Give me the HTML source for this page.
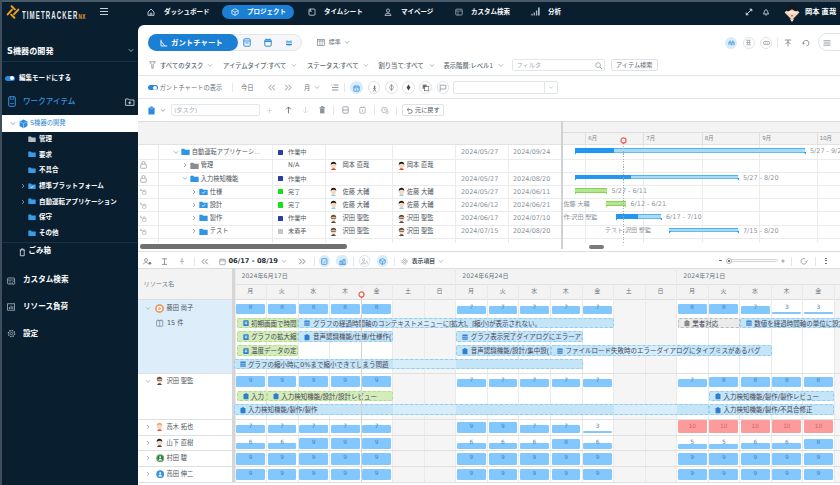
<!DOCTYPE html>
<html lang="ja"><head><meta charset="utf-8"><title>TimeTracker NX</title>
<style>
html,body{margin:0;padding:0;}
body{width:840px;height:485px;overflow:hidden;background:#091f30;font-family:"Liberation Sans","Noto Sans CJK JP",sans-serif;}
#root{position:relative;width:840px;height:485px;overflow:hidden;background:#091f30;}
#root div,#root svg{position:absolute;box-sizing:border-box;}
#root svg{overflow:visible;}
.t{white-space:nowrap;overflow:visible;}
.tb{white-space:nowrap;overflow:hidden;font-size:6.5px;color:#445;border-radius:1.5px;}
.tb span.l{position:absolute;left:0;top:0;}
.n{font-family:"DejaVu Sans","Liberation Sans",sans-serif;font-size:1.03em;}
</style></head><body><div id="root">

<div style="left:0px;top:0px;width:840px;height:2px;background:#4b5a68;"></div>
<div style="left:0px;top:0px;width:2px;height:485px;background:#3f4e5c;"></div>
<svg style="left:6px;top:4px;" width="15" height="16" viewBox="0 0 15 16"><g stroke="#f0a020" stroke-width="2" stroke-linecap="round" fill="none"><path d="M5.6 2.2 L8.8 5.4"/><path d="M12.3 5.6 L8.2 10.2"/><path d="M5.8 5.8 L1.7 10.4"/><path d="M5.2 10.6 L8.4 13.8"/></g></svg>
<div class="t" style="left:21.5px;top:8.7px;height:12px;line-height:12px;font-size:10.5px;font-weight:700;color:#e8edf2;letter-spacing:1.9px;transform:scaleX(.58);transform-origin:0 50%;">TIMETRACKER<span style="color:#f0a020;font-size:8px;letter-spacing:.8px;">NX</span></div>
<div style="left:100.3px;top:8.2px;width:7.8px;height:1px;background:#c6ced6;"></div>
<div style="left:100.3px;top:10.95px;width:7.8px;height:1px;background:#c6ced6;"></div>
<div style="left:100.3px;top:13.7px;width:7.8px;height:1px;background:#c6ced6;"></div>
<svg style="left:147px;top:8px;" width="8" height="8" viewBox="0 0 8 8"><path d="M1 4 L4 1 L7 4 V7.3 H1 Z" fill="none" stroke="#e6ebf0" stroke-width=".8"/><path d="M3.2 7.3 V5.2 H4.8 V7.3" fill="none" stroke="#e6ebf0" stroke-width=".7"/></svg>
<div class="t" style="left:164px;top:5.8px;height:12px;line-height:12px;font-size:6.5px;color:#fff;font-weight:700;">ダッシュボード</div>
<div style="left:221.7px;top:5.2px;width:72px;height:13.4px;background:#1b7fd4;border-radius:7px;"></div>
<svg style="left:231px;top:8px;" width="8" height="8" viewBox="0 0 8 8"><path d="M4 .8 L7.2 2.5 V5.7 L4 7.4 L.8 5.7 V2.5 Z M.8 2.5 L4 4.2 L7.2 2.5 M4 4.2 V7.4" fill="none" stroke="#fff" stroke-width=".7"/></svg>
<div class="t" style="left:247px;top:5.8px;height:12px;line-height:12px;font-size:6.5px;color:#fff;font-weight:700;">プロジェクト</div>
<svg style="left:308px;top:8px;" width="8" height="8" viewBox="0 0 8 8"><rect x="1" y="1" width="6" height="6.2" rx=".8" fill="none" stroke="#d5dbe2" stroke-width=".8"/><path d="M2.5 1 V3 M1 3.2 H4" stroke="#d5dbe2" stroke-width=".7"/></svg>
<div class="t" style="left:324px;top:5.8px;height:12px;line-height:12px;font-size:6.5px;color:#fff;font-weight:700;">タイムシート</div>
<svg style="left:383.5px;top:8px;" width="8" height="8" viewBox="0 0 8 8"><circle cx="4" cy="2.6" r="1.6" fill="none" stroke="#d5dbe2" stroke-width=".8"/><path d="M1 7.4 C1 4.6 7 4.6 7 7.4 Z" fill="none" stroke="#d5dbe2" stroke-width=".8"/></svg>
<div class="t" style="left:401px;top:5.8px;height:12px;line-height:12px;font-size:6.5px;color:#fff;font-weight:700;">マイページ</div>
<svg style="left:455px;top:8px;" width="8" height="8" viewBox="0 0 8 8"><rect x=".8" y="1.2" width="6.4" height="5.8" rx=".6" fill="none" stroke="#aab4be" stroke-width=".8"/><path d="M.8 3 H7.2 M3 3 V7" stroke="#aab4be" stroke-width=".6"/></svg>
<div class="t" style="left:471px;top:5.8px;height:12px;line-height:12px;font-size:6.5px;color:#fff;font-weight:700;">カスタム検索</div>
<svg style="left:531px;top:7px;" width="9" height="9" viewBox="0 0 9 9"><path d="M1 8.6 V6.8 M3.3 8.6 V5.4 M5.6 8.6 V3.4" stroke="#aeb8c2" stroke-width="1.3"/><path d="M7.9 8.6 V.4" stroke="#e6ebf0" stroke-width="1.3"/></svg>
<div class="t" style="left:548px;top:5.8px;height:12px;line-height:12px;font-size:6.5px;color:#fff;font-weight:700;">分析</div>
<svg style="left:745px;top:8px;" width="8" height="8" viewBox="0 0 8 8"><path d="M1.2 6.8 L6.8 1.2 M4.6 1.2 H6.8 V3.4 M1.2 4.6 V6.8 H3.4" fill="none" stroke="#e6ebf0" stroke-width=".9"/></svg>
<svg style="left:761.5px;top:8px;" width="8" height="8" viewBox="0 0 8 8"><path d="M1.5 6 C2.4 5 2 2 4 1.6 C6 2 5.6 5 6.5 6 Z M3.3 7 H4.7" fill="none" stroke="#e6ebf0" stroke-width=".8"/></svg>
<svg style="left:783px;top:3px;" width="18" height="19" viewBox="0 0 18 19"><path d="M9 1.6 L16.4 9.4 L9 17 L1.6 9.4 Z" fill="#f8d2b4"/><path d="M9 .2 L15.2 7.6 L12.6 8.4 L9 6.2 L5.4 8.4 L2.8 7.6 Z" fill="#15181c"/><path d="M4.6 8.6 H13.4 V10.4 H4.6 Z" fill="#f4f4f4"/><path d="M7.8 12.2 H10.2 L9 14 Z" fill="#e03a2a"/><path d="M6.8 15.6 L9 19 L11.2 15.6 L9 16.6 Z" fill="#fff"/></svg>
<div class="t" style="left:805px;top:5.8px;height:12px;line-height:12px;font-size:7.3px;color:#fff;font-weight:700;">岡本 直哉</div>
<div class="t" style="left:7px;top:44.6px;height:12px;line-height:12px;font-size:8.1px;color:#fff;font-weight:700;"><span class="n">S</span>機器の開発</div>
<svg style="left:128px;top:48px;" width="6" height="5" viewBox="0 0 6 5"><path d="M.8 1.2 L3 3.6 L5.2 1.2" fill="none" stroke="#aab6c2" stroke-width=".9"/></svg>
<div style="left:2px;top:61px;width:135px;height:0.8px;background:#1d3346;"></div>
<div style="left:5px;top:75.6px;width:9.5px;height:5px;background:#2b87dd;border-radius:2.5px;"></div>
<div style="left:10.3px;top:76.4px;width:3.4px;height:3.4px;background:#fff;border-radius:2px;"></div>
<div class="t" style="left:19px;top:72.2px;height:12px;line-height:12px;font-size:6.5px;color:#fff;font-weight:700;">編集モードにする</div>
<svg style="left:7.5px;top:95.5px;" width="8" height="11" viewBox="0 0 8 11"><rect x=".7" y=".7" width="6.6" height="9.6" rx="1" fill="none" stroke="#3a8fdc" stroke-width="1"/><path d="M2.3 .7 V3.2 H5.7 V.7 M2 7.6 H6" stroke="#3a8fdc" stroke-width=".8" fill="none"/></svg>
<div class="t" style="left:23px;top:95.5px;height:12px;line-height:12px;font-size:7.6px;color:#3a8fdc;font-weight:500;">ワークアイテム</div>
<svg style="left:124.5px;top:98px;" width="10" height="8" viewBox="0 0 10 8"><path d="M.6 1 H3.6 L4.4 2 H9 V7.4 H.6 Z" fill="none" stroke="#dfe5ea" stroke-width=".8"/><path d="M4.8 3.4 V6.2 M3.4 4.8 H6.2" stroke="#dfe5ea" stroke-width=".9"/></svg>
<div style="left:2px;top:115px;width:135.5px;height:16.5px;background:#fff;"></div>
<svg style="left:10px;top:121px;" width="6" height="5" viewBox="0 0 6 5"><path d="M.8 1.2 L3 3.6 L5.2 1.2" fill="none" stroke="#8a949e" stroke-width=".8"/></svg>
<svg style="left:18.5px;top:118.5px;" width="9" height="10" viewBox="0 0 9 10"><path d="M4.5 .6 L8.4 2.6 V7 L4.5 9.2 L.6 7 V2.6 Z" fill="#2b8be0"/><path d="M.6 2.6 L4.5 4.7 L8.4 2.6 M4.5 4.7 V9.2" stroke="#bfe0fb" stroke-width=".6" fill="none"/></svg>
<div class="t" style="left:30px;top:117.2px;height:12px;line-height:12px;font-size:6.3px;color:#2f86d6;"><span class="n">S</span>機器の開発</div>
<svg style="left:28px;top:135.8px;" width="8" height="6.4" viewBox="0 0 8 6.4"><path d="M.3 .6 H3 L3.7 1.5 H7.7 V6.1 H.3 Z" fill="#b9c0c6"/></svg>
<div class="t" style="left:39px;top:133.2px;height:12px;line-height:12px;font-size:6.5px;color:#fff;font-weight:700;">管理</div>
<svg style="left:28px;top:151.3px;" width="8" height="6.4" viewBox="0 0 8 6.4"><path d="M.3 .6 H3 L3.7 1.5 H7.7 V6.1 H.3 Z" fill="#3a9be8"/></svg>
<div class="t" style="left:39px;top:148.7px;height:12px;line-height:12px;font-size:6.5px;color:#fff;font-weight:700;">要求</div>
<svg style="left:28px;top:166.8px;" width="8" height="6.4" viewBox="0 0 8 6.4"><path d="M.3 .6 H3 L3.7 1.5 H7.7 V6.1 H.3 Z" fill="#3a9be8"/></svg>
<div class="t" style="left:39px;top:164.2px;height:12px;line-height:12px;font-size:6.5px;color:#fff;font-weight:700;">不具合</div>
<svg style="left:20.5px;top:183px;" width="4" height="6" viewBox="0 0 4 6"><path d="M1 1 L3 3 L1 5" fill="none" stroke="#9aa6b2" stroke-width=".8"/></svg>
<svg style="left:28px;top:182.8px;" width="8" height="6.4" viewBox="0 0 8 6.4"><path d="M.3 .6 H3 L3.7 1.5 H7.7 V6.1 H.3 Z" fill="#3a9be8"/><path d="M2.6 3.8 L3.6 4.8 L5.6 2.8" stroke="#fff" stroke-width=".8" fill="none"/></svg>
<div class="t" style="left:39px;top:180.2px;height:12px;line-height:12px;font-size:6.5px;color:#fff;font-weight:700;">標準プラットフォーム</div>
<svg style="left:20.5px;top:198.5px;" width="4" height="6" viewBox="0 0 4 6"><path d="M1 1 L3 3 L1 5" fill="none" stroke="#9aa6b2" stroke-width=".8"/></svg>
<svg style="left:28px;top:198.3px;" width="8" height="6.4" viewBox="0 0 8 6.4"><path d="M.3 .6 H3 L3.7 1.5 H7.7 V6.1 H.3 Z" fill="#3a9be8"/></svg>
<div class="t" style="left:39px;top:195.7px;height:12px;line-height:12px;font-size:6.5px;color:#fff;font-weight:700;">自動運転アプリケーション</div>
<svg style="left:28px;top:213.8px;" width="8" height="6.4" viewBox="0 0 8 6.4"><path d="M.3 .6 H3 L3.7 1.5 H7.7 V6.1 H.3 Z" fill="#3a9be8"/></svg>
<div class="t" style="left:39px;top:211.2px;height:12px;line-height:12px;font-size:6.5px;color:#fff;font-weight:700;">保守</div>
<svg style="left:28px;top:229.5px;" width="8" height="6.4" viewBox="0 0 8 6.4"><path d="M.3 .6 H3 L3.7 1.5 H7.7 V6.1 H.3 Z" fill="#3a9be8"/></svg>
<div class="t" style="left:39px;top:226.9px;height:12px;line-height:12px;font-size:6.5px;color:#fff;font-weight:700;">その他</div>
<svg style="left:19px;top:248px;" width="6.6" height="8.6" viewBox="0 0 6 8"><path d="M.6 1.8 H5.4 M2.2 1.8 V.8 H3.8 V1.8 M1.2 1.8 V7.2 H4.8 V1.8" fill="none" stroke="#d5dbe2" stroke-width=".8"/></svg>
<div class="t" style="left:28.5px;top:245.2px;height:12px;line-height:12px;font-size:7.5px;color:#fff;font-weight:700;">ごみ箱</div>
<div style="left:2px;top:242px;width:135px;height:0.7px;background:#1a3043;"></div>
<svg style="left:7px;top:276.5px;" width="9" height="8" viewBox="0 0 9 8"><rect x=".6" y="1" width="7" height="6" rx=".6" fill="none" stroke="#aab4be" stroke-width=".8"/><path d="M.6 3 H7.6 M3 3 V7" stroke="#aab4be" stroke-width=".6"/><circle cx="6.6" cy="5.8" r="1.3" fill="#091f30" stroke="#aab4be" stroke-width=".6"/></svg>
<div class="t" style="left:23px;top:274.3px;height:12px;line-height:12px;font-size:7.6px;color:#fff;font-weight:700;">カスタム検索</div>
<svg style="left:7px;top:303px;" width="9" height="8" viewBox="0 0 9 8"><rect x=".6" y=".8" width="7" height="6.4" fill="none" stroke="#aab4be" stroke-width=".8"/><path d="M2.4 6 V4 M4.1 6 V2.6 M5.8 6 V3.4" stroke="#aab4be" stroke-width=".9"/></svg>
<div class="t" style="left:23px;top:301px;height:12px;line-height:12px;font-size:7.6px;color:#fff;font-weight:700;">リソース負荷</div>
<svg style="left:7px;top:329px;" width="9" height="9" viewBox="0 0 9 9"><circle cx="4.5" cy="4.5" r="3.1" fill="none" stroke="#aab4be" stroke-width="1.3" stroke-dasharray="1.4 1"/><circle cx="4.5" cy="4.5" r="1.2" fill="none" stroke="#aab4be" stroke-width=".7"/></svg>
<div class="t" style="left:23px;top:327.6px;height:12px;line-height:12px;font-size:7.6px;color:#fff;font-weight:700;">設定</div>
<div style="left:137.5px;top:24.5px;width:703px;height:461px;background:#fff;border-top-left-radius:6px;"></div>
<div style="left:147.5px;top:33.5px;width:154.5px;height:17.8px;background:#f4f6f8;border:.6px solid #e3e6ea;border-radius:9px;"></div>
<div style="left:148px;top:33.5px;width:89.5px;height:17.8px;background:#1b7fd4;border-radius:9px;"></div>
<svg style="left:159.5px;top:38.5px;" width="8" height="8" viewBox="0 0 8 8"><path d="M1 .8 V7 H7.2 M1 2.4 L5 7" fill="none" stroke="#fff" stroke-width=".9"/></svg>
<div class="t" style="left:171px;top:36.5px;height:12px;line-height:12px;font-size:7.4px;color:#fff;font-weight:700;">ガントチャート</div>
<svg style="left:243px;top:38px;" width="8" height="9" viewBox="0 0 8 9"><rect x=".8" y=".8" width="6.4" height="7.4" rx="1" fill="none" stroke="#2b8be0" stroke-width="1"/><path d="M.8 3 H7.2 M2.4 5 H5.6" stroke="#2b8be0" stroke-width=".9"/></svg>
<svg style="left:264px;top:38px;" width="8" height="9" viewBox="0 0 8 9"><rect x=".8" y="1.6" width="6.4" height="6.6" rx="1" fill="none" stroke="#2b8be0" stroke-width="1"/><path d="M.8 3.2 H7.2" stroke="#2b8be0" stroke-width="1.6"/><path d="M2.4 .6 V2 M5.6 .6 V2" stroke="#2b8be0" stroke-width=".9"/></svg>
<svg style="left:285px;top:38.5px;" width="8" height="8" viewBox="0 0 8 8"><path d="M1 3 H7 M1 5.4 H7" stroke="#2b8be0" stroke-width="1.1"/><path d="M2 1.4 L3.4 3 M6 1.4 L4.6 3 M2.6 7 L4 5.4 L5.4 7" stroke="#2b8be0" stroke-width=".8" fill="none"/></svg>
<svg style="left:317px;top:38.5px;" width="8" height="7" viewBox="0 0 8 7"><rect x=".5" y=".6" width="7" height="5.8" fill="none" stroke="#7b848c" stroke-width=".7"/><path d="M.5 2 H7.5 M2.9 .6 V6.4 M5.2 .6 V6.4" stroke="#7b848c" stroke-width=".6"/></svg>
<div class="t" style="left:328.5px;top:36.3px;height:12px;line-height:12px;font-size:6.2px;color:#6b747c;">標準</div>
<svg style="left:344px;top:40px;" width="6" height="5" viewBox="0 0 6 5"><path d="M1 1.2 L3 3.4 L5 1.2" fill="none" stroke="#9aa2aa" stroke-width="0.8"/></svg>
<div style="left:725px;top:36.5px;width:12px;height:12px;background:#d9ecfb;border:.6px solid #d9ecfb;border-radius:50%;"></div>
<svg style="left:727.5px;top:39px;" width="7" height="7" viewBox="0 0 7 7"><path d="M1 6.2 V3 H3 V6.2 M4 6.2 V3 H6 V6.2 M1.6 2 H2.6 M4.4 2 H5.4" fill="none" stroke="#2b8be0" stroke-width=".8"/></svg>
<div style="left:742.5px;top:36.5px;width:12px;height:12px;background:#fff;border:.6px solid #dfe3e7;border-radius:50%;"></div>
<svg style="left:745px;top:39px;" width="7" height="7" viewBox="0 0 7 7"><path d="M1 1.2 H6 M1 3.5 H6 M1 5.8 H6 M2.6 1.2 V5.8 M4.4 1.2 V5.8" stroke="#8a939b" stroke-width=".6"/></svg>
<div style="left:760px;top:36.5px;width:12px;height:12px;background:#fff;border:.6px solid #dfe3e7;border-radius:50%;"></div>
<svg style="left:762.5px;top:40.5px;" width="7" height="4" viewBox="0 0 7 4"><rect x=".4" y=".4" width="6.2" height="3.2" rx="1.6" fill="none" stroke="#8a939b" stroke-width=".7"/><circle cx="2.4" cy="2" r=".5" fill="#8a939b"/><circle cx="4.6" cy="2" r=".5" fill="#8a939b"/></svg>
<div style="left:777.3px;top:38px;width:0.6px;height:9px;background:#e4e7ea;"></div>
<svg style="left:784px;top:38.5px;" width="8" height="8" viewBox="0 0 8 8"><path d="M.8 1 H7.2 M4 1.2 V7.4 M4 2.6 L1.6 5 M4 2.6 L6.4 5" fill="none" stroke="#737c84" stroke-width=".8"/></svg>
<svg style="left:802px;top:38.5px;" width="8" height="8" viewBox="0 0 8 8"><path d="M1.4 5 A2.8 2.8 0 1 1 4.6 6.9" fill="none" stroke="#737c84" stroke-width=".8"/><path d="M.6 3.6 L1.4 5.2 L2.8 4.2" fill="none" stroke="#737c84" stroke-width=".7"/></svg>
<div style="left:817.5px;top:33.2px;width:40px;height:18.2px;background:#fff;border:.6px solid #dfe3e7;border-radius:9px;"></div>
<svg style="left:823px;top:39.5px;" width="8" height="6" viewBox="0 0 8 6"><path d="M.5 .8 H7.5 M.5 3 H7.5 M.5 5.2 H7.5" stroke="#8a939b" stroke-width=".9"/></svg>
<svg style="left:148.5px;top:61px;" width="7" height="8" viewBox="0 0 7 8"><path d="M.6 .8 H6.4 L4.2 3.6 V7.2 H2.8 V3.6 Z" fill="none" stroke="#737c84" stroke-width=".7"/></svg>
<div class="t" style="left:160px;top:59.6px;height:12px;line-height:12px;font-size:6.3px;color:#626b73;font-weight:500;">すべてのタスク</div>
<svg style="left:207px;top:63.4px;" width="6" height="5" viewBox="0 0 6 5"><path d="M1 1.2 L3 3.4 L5 1.2" fill="none" stroke="#9aa2aa" stroke-width="0.7"/></svg>
<div class="t" style="left:223px;top:59.6px;height:12px;line-height:12px;font-size:6.3px;color:#626b73;font-weight:500;">アイテムタイプ:すべて</div>
<svg style="left:291px;top:63.4px;" width="6" height="5" viewBox="0 0 6 5"><path d="M1 1.2 L3 3.4 L5 1.2" fill="none" stroke="#9aa2aa" stroke-width="0.7"/></svg>
<div class="t" style="left:307px;top:59.6px;height:12px;line-height:12px;font-size:6.3px;color:#626b73;font-weight:500;">ステータス:すべて</div>
<svg style="left:363px;top:63.4px;" width="6" height="5" viewBox="0 0 6 5"><path d="M1 1.2 L3 3.4 L5 1.2" fill="none" stroke="#9aa2aa" stroke-width="0.7"/></svg>
<div class="t" style="left:378.5px;top:59.6px;height:12px;line-height:12px;font-size:6.3px;color:#626b73;font-weight:500;">割り当て:すべて</div>
<svg style="left:429px;top:63.4px;" width="6" height="5" viewBox="0 0 6 5"><path d="M1 1.2 L3 3.4 L5 1.2" fill="none" stroke="#9aa2aa" stroke-width="0.7"/></svg>
<div class="t" style="left:443.5px;top:59.6px;height:12px;line-height:12px;font-size:6.3px;color:#626b73;font-weight:500;">表示階層:レベル<span class="n">1</span></div>
<svg style="left:498px;top:63.4px;" width="6" height="5" viewBox="0 0 6 5"><path d="M1 1.2 L3 3.4 L5 1.2" fill="none" stroke="#9aa2aa" stroke-width="0.7"/></svg>
<div style="left:512px;top:58.7px;width:93px;height:12.6px;background:#fff;border:.6px solid #e4e7ea;border-radius:2px;"></div>
<div class="t" style="left:516.5px;top:59.2px;height:12px;line-height:12px;font-size:6.2px;color:#a3abb2;">フィルタ</div>
<svg style="left:595px;top:61.5px;" width="7.5" height="7.5" viewBox="0 0 7.5 7.5"><circle cx="3.1" cy="3.1" r="2.4" fill="none" stroke="#8a939b" stroke-width=".7"/><path d="M4.9 4.9 L6.9 6.9" stroke="#8a939b" stroke-width=".8"/></svg>
<div style="left:610.5px;top:58.7px;width:47.5px;height:12.6px;background:#fff;border:.6px solid #dfe2e5;border-radius:2px;"></div>
<div class="t" style="left:610.5px;top:59.2px;height:12px;line-height:12px;font-size:6.2px;color:#5b646c;width:47.5px;text-align:center;">アイテム検索</div>
<div style="left:137.5px;top:75.2px;width:703px;height:0.7px;background:#e3e6e9;"></div>
<div style="left:148px;top:85.4px;width:9.5px;height:5px;background:#2b87dd;border-radius:2.5px;"></div>
<div style="left:153.2px;top:86.2px;width:3.4px;height:3.4px;background:#fff;border-radius:2px;"></div>
<div class="t" style="left:159.5px;top:81.8px;height:12px;line-height:12px;font-size:6.3px;color:#6b747c;">ガントチャートの表示</div>
<div style="left:232px;top:83px;width:0.6px;height:9px;background:#e4e7ea;"></div>
<div class="t" style="left:241px;top:81.8px;height:12px;line-height:12px;font-size:6.3px;color:#6b747c;">今日</div>
<svg style="left:267.5px;top:84.4px;" width="8" height="7" viewBox="0 0 8 7"><path d="M3.6 .8 L1 3.5 L3.6 6.2 M6.8 .8 L4.2 3.5 L6.8 6.2" fill="none" stroke="#737c84" stroke-width=".8"/></svg>
<svg style="left:283.5px;top:84.4px;" width="8" height="7" viewBox="0 0 8 7"><path d="M1.2 .8 L3.8 3.5 L1.2 6.2 M4.4 .8 L7 3.5 L4.4 6.2" fill="none" stroke="#737c84" stroke-width=".8"/></svg>
<div class="t" style="left:304px;top:81.8px;height:12px;line-height:12px;font-size:6.3px;color:#6b747c;">月</div>
<svg style="left:314px;top:85.1px;" width="6" height="5" viewBox="0 0 6 5"><path d="M1 1.2 L3 3.4 L5 1.2" fill="none" stroke="#9aa2aa" stroke-width="0.7"/></svg>
<svg style="left:330.5px;top:84.4px;" width="8" height="7" viewBox="0 0 8 7"><path d="M2.6 1 H7.4 M1 3.5 H7.4 M1 6 H7.4 M.6 1 H1.4" stroke="#737c84" stroke-width=".8"/></svg>
<div style="left:344px;top:83px;width:0.6px;height:9px;background:#e4e7ea;"></div>
<div style="left:350.1px;top:81.4px;width:12.8px;height:12.8px;background:#d9ecfb;border:.6px solid #d9ecfb;border-radius:50%;"></div>
<svg style="left:353px;top:84.5px;" width="7" height="7" viewBox="0 0 7 7"><rect x=".8" y="1.2" width="5.4" height="5" rx=".6" fill="none" stroke="#2b8be0" stroke-width=".8"/><path d="M.8 2.8 H6.2 M2.2 .4 V1.6 M4.8 .4 V1.6 M3.5 3.6 V5.4" stroke="#2b8be0" stroke-width=".7"/></svg>
<div style="left:367.6px;top:81.4px;width:12.8px;height:12.8px;background:#fff;border:.6px solid #dfe3e7;border-radius:50%;"></div>
<svg style="left:370.6px;top:84.5px;" width="7" height="7" viewBox="0 0 7 7"><circle cx="3.6" cy="1.2" r=".8" fill="#555"/><path d="M3.6 2.2 V4.4 L2.2 6.4 M3.6 4.4 L4.8 6.4 M2 3.4 L3.6 2.8 L5 3.6" fill="none" stroke="#555" stroke-width=".7"/></svg>
<div style="left:384.8px;top:81.4px;width:12.8px;height:12.8px;background:#fff;border:.6px solid #dfe3e7;border-radius:50%;"></div>
<svg style="left:387.7px;top:84.3px;" width="7" height="7" viewBox="0 0 7 7"><path d="M3.5 .6 L5.6 3.5 L3.5 6.4 L1.4 3.5 Z M3.5 .6 V6.4" fill="none" stroke="#666" stroke-width=".6"/></svg>
<div style="left:402.2px;top:81.4px;width:12.8px;height:12.8px;background:#fff;border:.6px solid #dfe3e7;border-radius:50%;"></div>
<svg style="left:405.1px;top:84.3px;" width="7" height="7" viewBox="0 0 7 7"><path d="M3.5 .4 L5.4 3.5 L3.5 6.6 L1.6 3.5 Z" fill="#444"/></svg>
<div style="left:419.2px;top:81.4px;width:12.8px;height:12.8px;background:#fff;border:.6px solid #dfe3e7;border-radius:50%;"></div>
<div style="left:436.6px;top:81.4px;width:12.8px;height:12.8px;background:#fff;border:.6px solid #dfe3e7;border-radius:50%;"></div>
<svg style="left:422px;top:84.2px;" width="7.5" height="7.5" viewBox="0 0 7.5 7.5"><rect x=".6" y=".6" width="4.2" height="4.2" fill="#777"/><rect x="2.6" y="2.6" width="4.2" height="4.2" fill="#fff" stroke="#555" stroke-width=".6"/></svg>
<svg style="left:439.3px;top:84px;" width="8" height="8" viewBox="0 0 8 8"><path d="M1.2 .8 V7.4 M1.2 1.2 H6.8 V5 H1.2" fill="none" stroke="#8a939b" stroke-width=".8"/></svg>
<div style="left:452.5px;top:81px;width:105px;height:13.4px;background:#fff;border:.6px solid #e3e6e9;border-radius:2px;"></div>
<div style="left:544px;top:82px;width:0.6px;height:11.4px;background:#e3e6e9;"></div>
<svg style="left:548px;top:85.3px;" width="6" height="5" viewBox="0 0 6 5"><path d="M1 1.2 L3 3.4 L5 1.2" fill="none" stroke="#b5bcc2" stroke-width="0.7"/></svg>
<div style="left:137.5px;top:98px;width:703px;height:0.7px;background:#e3e6e9;"></div>
<svg style="left:148.3px;top:105.5px;" width="7" height="9" viewBox="0 0 7 9"><rect x=".4" y="1.4" width="6.2" height="7.2" rx=".7" fill="#2b8be0"/><rect x="2" y=".3" width="3" height="2" rx=".4" fill="#2b8be0" stroke="#fff" stroke-width=".4"/></svg>
<svg style="left:160px;top:107.8px;" width="6" height="5" viewBox="0 0 6 5"><path d="M1 1.2 L3 3.4 L5 1.2" fill="none" stroke="#8a939b" stroke-width="0.8"/></svg>
<div style="left:171px;top:103.7px;width:88.5px;height:12.6px;background:#fff;border:.6px solid #e4e7ea;border-radius:2px;"></div>
<div class="t" style="left:174.3px;top:104px;height:12px;line-height:12px;font-size:6.2px;color:#a3abb2;">(タスク)</div>
<svg style="left:266px;top:106.5px;" width="7" height="7" viewBox="0 0 7 7"><path d="M3.5 .8 V6.2 M.8 3.5 H6.2" stroke="#d3d7db" stroke-width=".8"/></svg>
<svg style="left:284.5px;top:106px;" width="7" height="8" viewBox="0 0 7 8"><path d="M3.5 7.4 V1 M1 3.4 L3.5 .9 L6 3.4" fill="none" stroke="#5b646c" stroke-width=".8"/></svg>
<svg style="left:301.5px;top:106px;" width="7" height="8" viewBox="0 0 7 8"><path d="M3.5 .6 V7 M1 4.6 L3.5 7.1 L6 4.6" fill="none" stroke="#d3d7db" stroke-width=".8"/></svg>
<svg style="left:318.8px;top:106px;" width="6.5" height="8" viewBox="0 0 6.5 8"><path d="M.4 1.8 H6.1 M2.2 1.8 V.7 H4.3 V1.8" fill="none" stroke="#6d767e" stroke-width=".8"/><path d="M1.1 2.4 H5.4 V7.4 H1.1 Z" fill="#8a939b"/></svg>
<div style="left:333px;top:105.5px;width:0.6px;height:9px;background:#e4e7ea;"></div>
<svg style="left:341.5px;top:106px;" width="7" height="8" viewBox="0 0 7 8"><rect x=".8" y=".8" width="5.4" height="6.4" rx=".8" fill="none" stroke="#7b848c" stroke-width=".7"/><path d="M.8 4 H6.2" stroke="#7b848c" stroke-width=".7"/></svg>
<svg style="left:359px;top:106px;" width="7" height="8" viewBox="0 0 7 8"><rect x=".8" y="1.4" width="5.4" height="5.8" rx=".8" fill="none" stroke="#9aa2aa" stroke-width=".7"/><path d="M2.2 .6 V2 M4.8 .6 V2 M3.5 3.4 V5.8" stroke="#9aa2aa" stroke-width=".7"/></svg>
<div style="left:374px;top:105.5px;width:0.6px;height:9px;background:#e4e7ea;"></div>
<svg style="left:380.5px;top:106px;" width="8" height="8" viewBox="0 0 8 8"><circle cx="3.4" cy="4" r="2.8" fill="none" stroke="#9aa2aa" stroke-width=".7"/><path d="M3.4 2.4 V4 H5" fill="none" stroke="#9aa2aa" stroke-width=".6"/><circle cx="6" cy="6.2" r="1.3" fill="#fff" stroke="#9aa2aa" stroke-width=".6"/></svg>
<div style="left:396px;top:105.5px;width:0.6px;height:9px;background:#e4e7ea;"></div>
<div style="left:401.7px;top:103.7px;width:42px;height:12.6px;background:#fff;border:.6px solid #dfe2e5;border-radius:2px;"></div>
<svg style="left:405.5px;top:106.5px;" width="7" height="7" viewBox="0 0 7 7"><path d="M1.4 2.6 H4.4 A1.8 1.8 0 0 1 4.4 6.2 H2.2 M2.8 1 L1.2 2.6 L2.8 4.2" fill="none" stroke="#5b646c" stroke-width=".8"/></svg>
<div class="t" style="left:415px;top:104px;height:12px;line-height:12px;font-size:6.2px;color:#4b545c;">元に戻す</div>
<div style="left:137.5px;top:120.6px;width:703px;height:24.6px;background:#f3f3f3;border-top:.7px solid #dcdcdc;border-bottom:.7px solid #e2e2e2;"></div>
<div style="left:563px;top:132px;width:277px;height:0.6px;background:#dedede;"></div>
<div style="left:137.5px;top:158.5px;width:424px;height:0.6px;background:#ebebeb;"></div>
<div style="left:563px;top:158.5px;width:277px;height:0.6px;background:#ececec;"></div>
<div style="left:137.5px;top:171.7px;width:424px;height:0.6px;background:#ebebeb;"></div>
<div style="left:563px;top:171.7px;width:277px;height:0.6px;background:#ececec;"></div>
<div style="left:137.5px;top:184.9px;width:424px;height:0.6px;background:#ebebeb;"></div>
<div style="left:563px;top:184.9px;width:277px;height:0.6px;background:#ececec;"></div>
<div style="left:137.5px;top:198.1px;width:424px;height:0.6px;background:#ebebeb;"></div>
<div style="left:563px;top:198.1px;width:277px;height:0.6px;background:#ececec;"></div>
<div style="left:137.5px;top:211.3px;width:424px;height:0.6px;background:#ebebeb;"></div>
<div style="left:563px;top:211.3px;width:277px;height:0.6px;background:#ececec;"></div>
<div style="left:137.5px;top:224.5px;width:424px;height:0.6px;background:#ebebeb;"></div>
<div style="left:563px;top:224.5px;width:277px;height:0.6px;background:#ececec;"></div>
<div style="left:137.5px;top:237.7px;width:424px;height:0.6px;background:#ebebeb;"></div>
<div style="left:563px;top:237.7px;width:277px;height:0.6px;background:#ececec;"></div>
<div style="left:158px;top:145.2px;width:0.6px;height:98px;background:#ebebeb;"></div>
<div style="left:272px;top:145.2px;width:0.6px;height:98px;background:#ebebeb;"></div>
<div style="left:325px;top:145.2px;width:0.6px;height:98px;background:#ebebeb;"></div>
<div style="left:392px;top:145.2px;width:0.6px;height:98px;background:#ebebeb;"></div>
<div style="left:455px;top:145.2px;width:0.6px;height:98px;background:#ebebeb;"></div>
<div style="left:507.5px;top:145.2px;width:0.6px;height:98px;background:#ebebeb;"></div>
<div style="left:585px;top:132px;width:0.6px;height:13px;background:#e0e0e0;"></div>
<div style="left:585px;top:145px;width:0.6px;height:99px;background:#ececec;"></div>
<div style="left:643px;top:132px;width:0.6px;height:13px;background:#e0e0e0;"></div>
<div style="left:643px;top:145px;width:0.6px;height:99px;background:#ececec;"></div>
<div style="left:701.5px;top:132px;width:0.6px;height:13px;background:#e0e0e0;"></div>
<div style="left:701.5px;top:145px;width:0.6px;height:99px;background:#ececec;"></div>
<div style="left:759px;top:132px;width:0.6px;height:13px;background:#e0e0e0;"></div>
<div style="left:759px;top:145px;width:0.6px;height:99px;background:#ececec;"></div>
<div style="left:816.5px;top:132px;width:0.6px;height:13px;background:#e0e0e0;"></div>
<div style="left:816.5px;top:145px;width:0.6px;height:99px;background:#ececec;"></div>
<div class="t" style="left:588.2px;top:132.4px;height:12px;line-height:12px;font-size:5.3px;color:#7b848c;"><span class="n">6</span>月</div>
<div class="t" style="left:646.2px;top:132.4px;height:12px;line-height:12px;font-size:5.3px;color:#7b848c;"><span class="n">7</span>月</div>
<div class="t" style="left:704.7px;top:132.4px;height:12px;line-height:12px;font-size:5.3px;color:#7b848c;"><span class="n">8</span>月</div>
<div class="t" style="left:762.2px;top:132.4px;height:12px;line-height:12px;font-size:5.3px;color:#7b848c;"><span class="n">9</span>月</div>
<div class="t" style="left:819.7px;top:132.4px;height:12px;line-height:12px;font-size:5.3px;color:#7b848c;"><span class="n">10</span>月</div>
<div style="left:561px;top:120.6px;width:1.6px;height:128px;background:#cfd2d5;"></div>
<svg style="left:173px;top:149.7px;" width="6" height="5" viewBox="0 0 6 5"><path d="M1 1.2 L3 3.4 L5 1.2" fill="none" stroke="#8a939b" stroke-width="0.7"/></svg>
<svg style="left:180.6px;top:148.35px;" width="9" height="7.3" viewBox="0 0 8 6.4"><path d="M.3 .6 H3 L3.7 1.5 H7.7 V6.1 H.3 Z" fill="#2f96e6"/></svg>
<div class="t" style="left:191.8px;top:146.2px;height:12px;line-height:12px;font-size:6.25px;color:#4b545c;">自動運転アプリケーシ…</div>
<div style="left:277.5px;top:149.6px;width:5.2px;height:5.2px;background:#2a3fa0;border-radius:.6px;"></div>
<div class="t" style="left:288px;top:146.2px;height:12px;line-height:12px;font-size:6.2px;color:#555e66;">作業中</div>
<div class="t" style="left:461px;top:146.2px;height:12px;line-height:12px;font-size:6.3px;color:#8a9299;"><span class="n">2024/05/27</span></div>
<div class="t" style="left:513px;top:146.2px;height:12px;line-height:12px;font-size:6.3px;color:#8a9299;"><span class="n">2024/09/24</span></div>
<svg style="left:140px;top:161.4px;" width="7" height="8" viewBox="0 0 6 7"><rect x=".6" y="2.8" width="4.8" height="3.6" rx=".5" fill="none" stroke="#9aa2aa" stroke-width=".7"/><path d="M1.6 2.8 V1.8 A1.4 1.4 0 0 1 4.4 1.8 V2.8" fill="none" stroke="#9aa2aa" stroke-width=".7"/></svg>
<svg style="left:183px;top:162.4px;" width="4" height="6" viewBox="0 0 4 6"><path d="M1 1 L3 3 L1 5" fill="none" stroke="#8a939b" stroke-width=".8"/></svg>
<svg style="left:189.6px;top:161.55px;" width="9" height="7.3" viewBox="0 0 8 6.4"><path d="M.3 .6 H3 L3.7 1.5 H7.7 V6.1 H.3 Z" fill="#8c8c8c"/></svg>
<div class="t" style="left:200.8px;top:159.4px;height:12px;line-height:12px;font-size:6.25px;color:#4b545c;">管理</div>
<div class="t" style="left:288px;top:159.4px;height:12px;line-height:12px;font-size:6.2px;color:#555e66;"><span class="n">N/A</span></div>
<svg style="left:330.2px;top:160.7px;" width="7" height="9.2" viewBox="0 0 7 9.2"><path d="M1.2 9 C1.2 6.8 5.8 6.8 5.8 9 Z" fill="#d8483a"/><ellipse cx="3.5" cy="4.2" rx="2.6" ry="2.9" fill="#f8d8be"/><path d="M.7 3.9 C.4 -.3 6.6 -.3 6.3 3.9 C5 2.5 2 2.5 .7 3.9 Z" fill="#1c1c1c"/></svg>
<div class="t" style="left:342.5px;top:159.4px;height:12px;line-height:12px;font-size:6.25px;color:#4b545c;">岡本 直哉</div>
<svg style="left:398px;top:160.7px;" width="7" height="9.2" viewBox="0 0 7 9.2"><path d="M1.2 9 C1.2 6.8 5.8 6.8 5.8 9 Z" fill="#d8483a"/><ellipse cx="3.5" cy="4.2" rx="2.6" ry="2.9" fill="#f8d8be"/><path d="M.7 3.9 C.4 -.3 6.6 -.3 6.3 3.9 C5 2.5 2 2.5 .7 3.9 Z" fill="#1c1c1c"/></svg>
<div class="t" style="left:406.8px;top:159.4px;height:12px;line-height:12px;font-size:6.25px;color:#4b545c;">岡本 直哉</div>
<svg style="left:140px;top:174.6px;" width="7" height="8" viewBox="0 0 6 7"><rect x=".6" y="2.8" width="4.8" height="3.6" rx=".5" fill="none" stroke="#9aa2aa" stroke-width=".7"/><path d="M1.6 2.8 V1.8 A1.4 1.4 0 0 1 4.4 1.8 V2.8" fill="none" stroke="#9aa2aa" stroke-width=".7"/></svg>
<svg style="left:182px;top:176.1px;" width="6" height="5" viewBox="0 0 6 5"><path d="M1 1.2 L3 3.4 L5 1.2" fill="none" stroke="#8a939b" stroke-width="0.7"/></svg>
<svg style="left:189.6px;top:174.75px;" width="9" height="7.3" viewBox="0 0 8 6.4"><path d="M.3 .6 H3 L3.7 1.5 H7.7 V6.1 H.3 Z" fill="#2f96e6"/></svg>
<div class="t" style="left:200.8px;top:172.6px;height:12px;line-height:12px;font-size:6.25px;color:#4b545c;">入力検知機能</div>
<div style="left:277.5px;top:176px;width:5.2px;height:5.2px;background:#2a3fa0;border-radius:.6px;"></div>
<div class="t" style="left:288px;top:172.6px;height:12px;line-height:12px;font-size:6.2px;color:#555e66;">作業中</div>
<div class="t" style="left:461px;top:172.6px;height:12px;line-height:12px;font-size:6.3px;color:#8a9299;"><span class="n">2024/05/27</span></div>
<div class="t" style="left:513px;top:172.6px;height:12px;line-height:12px;font-size:6.3px;color:#8a9299;"><span class="n">2024/08/20</span></div>
<svg style="left:139.5px;top:188.3px;" width="7" height="7" viewBox="0 0 7 7"><path d="M.8 .6 V2.6 H2.2" fill="none" stroke="#8a939b" stroke-width=".7"/><rect x="2.6" y="3.4" width="3.4" height="2.8" rx=".4" fill="none" stroke="#9aa2aa" stroke-width=".6"/><path d="M3.3 3.4 V2.8 A1 1 0 0 1 5.3 2.8 V3.4" fill="none" stroke="#9aa2aa" stroke-width=".6"/></svg>
<svg style="left:192px;top:188.8px;" width="4" height="6" viewBox="0 0 4 6"><path d="M1 1 L3 3 L1 5" fill="none" stroke="#8a939b" stroke-width=".8"/></svg>
<svg style="left:198.6px;top:187.95px;" width="9" height="7.3" viewBox="0 0 8 6.4"><path d="M.3 .6 H3 L3.7 1.5 H7.7 V6.1 H.3 Z" fill="#2f96e6"/><path d="M2.6 3.8 L3.6 4.8 L5.6 2.8" stroke="#fff" stroke-width=".8" fill="none"/></svg>
<div class="t" style="left:209.8px;top:185.8px;height:12px;line-height:12px;font-size:6.25px;color:#4b545c;">仕様</div>
<div style="left:277.5px;top:189.2px;width:5.2px;height:5.2px;background:#18e018;border-radius:.6px;"></div>
<div class="t" style="left:288px;top:185.8px;height:12px;line-height:12px;font-size:6.2px;color:#555e66;">完了</div>
<svg style="left:330.2px;top:187.1px;" width="7" height="9.2" viewBox="0 0 7 9.2"><path d="M1.2 9 C1.2 6.8 5.8 6.8 5.8 9 Z" fill="#9ccbea"/><ellipse cx="3.5" cy="4.2" rx="2.6" ry="2.9" fill="#f8d8be"/><path d="M.7 3.9 C.4 -.3 6.6 -.3 6.3 3.9 C5 2.5 2 2.5 .7 3.9 Z" fill="#1c1c1c"/></svg>
<div class="t" style="left:342.5px;top:185.8px;height:12px;line-height:12px;font-size:6.25px;color:#4b545c;">佐藤 大輔</div>
<svg style="left:398px;top:187.1px;" width="7" height="9.2" viewBox="0 0 7 9.2"><path d="M1.2 9 C1.2 6.8 5.8 6.8 5.8 9 Z" fill="#9ccbea"/><ellipse cx="3.5" cy="4.2" rx="2.6" ry="2.9" fill="#f8d8be"/><path d="M.7 3.9 C.4 -.3 6.6 -.3 6.3 3.9 C5 2.5 2 2.5 .7 3.9 Z" fill="#1c1c1c"/></svg>
<div class="t" style="left:406.8px;top:185.8px;height:12px;line-height:12px;font-size:6.25px;color:#4b545c;">佐藤 大輔</div>
<div class="t" style="left:461px;top:185.8px;height:12px;line-height:12px;font-size:6.3px;color:#8a9299;"><span class="n">2024/05/27</span></div>
<div class="t" style="left:513px;top:185.8px;height:12px;line-height:12px;font-size:6.3px;color:#8a9299;"><span class="n">2024/06/11</span></div>
<svg style="left:139.5px;top:201.5px;" width="7" height="7" viewBox="0 0 7 7"><path d="M.8 .6 V2.6 H2.2" fill="none" stroke="#8a939b" stroke-width=".7"/><rect x="2.6" y="3.4" width="3.4" height="2.8" rx=".4" fill="none" stroke="#9aa2aa" stroke-width=".6"/><path d="M3.3 3.4 V2.8 A1 1 0 0 1 5.3 2.8 V3.4" fill="none" stroke="#9aa2aa" stroke-width=".6"/></svg>
<svg style="left:192px;top:202px;" width="4" height="6" viewBox="0 0 4 6"><path d="M1 1 L3 3 L1 5" fill="none" stroke="#8a939b" stroke-width=".8"/></svg>
<svg style="left:198.6px;top:201.15px;" width="9" height="7.3" viewBox="0 0 8 6.4"><path d="M.3 .6 H3 L3.7 1.5 H7.7 V6.1 H.3 Z" fill="#2f96e6"/><path d="M2.6 3.8 L3.6 4.8 L5.6 2.8" stroke="#fff" stroke-width=".8" fill="none"/></svg>
<div class="t" style="left:209.8px;top:199px;height:12px;line-height:12px;font-size:6.25px;color:#4b545c;">設計</div>
<div style="left:277.5px;top:202.4px;width:5.2px;height:5.2px;background:#18e018;border-radius:.6px;"></div>
<div class="t" style="left:288px;top:199px;height:12px;line-height:12px;font-size:6.2px;color:#555e66;">完了</div>
<svg style="left:330.2px;top:200.3px;" width="7" height="9.2" viewBox="0 0 7 9.2"><path d="M1.2 9 C1.2 6.8 5.8 6.8 5.8 9 Z" fill="#9ccbea"/><ellipse cx="3.5" cy="4.2" rx="2.6" ry="2.9" fill="#f8d8be"/><path d="M.7 3.9 C.4 -.3 6.6 -.3 6.3 3.9 C5 2.5 2 2.5 .7 3.9 Z" fill="#1c1c1c"/></svg>
<div class="t" style="left:342.5px;top:199px;height:12px;line-height:12px;font-size:6.25px;color:#4b545c;">佐藤 大輔</div>
<svg style="left:398px;top:200.3px;" width="7" height="9.2" viewBox="0 0 7 9.2"><path d="M1.2 9 C1.2 6.8 5.8 6.8 5.8 9 Z" fill="#9ccbea"/><ellipse cx="3.5" cy="4.2" rx="2.6" ry="2.9" fill="#f8d8be"/><path d="M.7 3.9 C.4 -.3 6.6 -.3 6.3 3.9 C5 2.5 2 2.5 .7 3.9 Z" fill="#1c1c1c"/></svg>
<div class="t" style="left:406.8px;top:199px;height:12px;line-height:12px;font-size:6.25px;color:#4b545c;">佐藤 大輔</div>
<div class="t" style="left:461px;top:199px;height:12px;line-height:12px;font-size:6.3px;color:#8a9299;"><span class="n">2024/06/12</span></div>
<div class="t" style="left:513px;top:199px;height:12px;line-height:12px;font-size:6.3px;color:#8a9299;"><span class="n">2024/06/21</span></div>
<svg style="left:139.5px;top:214.7px;" width="7" height="7" viewBox="0 0 7 7"><path d="M.8 .6 V2.6 H2.2" fill="none" stroke="#8a939b" stroke-width=".7"/><rect x="2.6" y="3.4" width="3.4" height="2.8" rx=".4" fill="none" stroke="#9aa2aa" stroke-width=".6"/><path d="M3.3 3.4 V2.8 A1 1 0 0 1 5.3 2.8 V3.4" fill="none" stroke="#9aa2aa" stroke-width=".6"/></svg>
<svg style="left:192px;top:215.2px;" width="4" height="6" viewBox="0 0 4 6"><path d="M1 1 L3 3 L1 5" fill="none" stroke="#8a939b" stroke-width=".8"/></svg>
<svg style="left:198.6px;top:214.35px;" width="9" height="7.3" viewBox="0 0 8 6.4"><path d="M.3 .6 H3 L3.7 1.5 H7.7 V6.1 H.3 Z" fill="#2f96e6"/></svg>
<div class="t" style="left:209.8px;top:212.2px;height:12px;line-height:12px;font-size:6.25px;color:#4b545c;">製作</div>
<div style="left:277.5px;top:215.6px;width:5.2px;height:5.2px;background:#2a3fa0;border-radius:.6px;"></div>
<div class="t" style="left:288px;top:212.2px;height:12px;line-height:12px;font-size:6.2px;color:#555e66;">作業中</div>
<svg style="left:330.2px;top:213.5px;" width="7" height="9.2" viewBox="0 0 7 9.2"><path d="M1.2 9 C1.2 6.8 5.8 6.8 5.8 9 Z" fill="#4a4a4a"/><ellipse cx="3.5" cy="4.2" rx="2.6" ry="2.9" fill="#f8d8be"/><path d="M.7 3.9 C.4 -.3 6.6 -.3 6.3 3.9 C5 2.5 2 2.5 .7 3.9 Z" fill="#6a4a2c"/><path d="M1.2 4.3 H5.8" stroke="#3a3a3a" stroke-width=".8"/></svg>
<div class="t" style="left:342.5px;top:212.2px;height:12px;line-height:12px;font-size:6.25px;color:#4b545c;">沢田 聖監</div>
<svg style="left:398px;top:213.5px;" width="7" height="9.2" viewBox="0 0 7 9.2"><path d="M1.2 9 C1.2 6.8 5.8 6.8 5.8 9 Z" fill="#4a4a4a"/><ellipse cx="3.5" cy="4.2" rx="2.6" ry="2.9" fill="#f8d8be"/><path d="M.7 3.9 C.4 -.3 6.6 -.3 6.3 3.9 C5 2.5 2 2.5 .7 3.9 Z" fill="#6a4a2c"/><path d="M1.2 4.3 H5.8" stroke="#3a3a3a" stroke-width=".8"/></svg>
<div class="t" style="left:406.8px;top:212.2px;height:12px;line-height:12px;font-size:6.25px;color:#4b545c;">沢田 聖監</div>
<div class="t" style="left:461px;top:212.2px;height:12px;line-height:12px;font-size:6.3px;color:#8a9299;"><span class="n">2024/06/17</span></div>
<div class="t" style="left:513px;top:212.2px;height:12px;line-height:12px;font-size:6.3px;color:#8a9299;"><span class="n">2024/07/10</span></div>
<svg style="left:139.5px;top:227.9px;" width="7" height="7" viewBox="0 0 7 7"><path d="M.8 .6 V2.6 H2.2" fill="none" stroke="#8a939b" stroke-width=".7"/><rect x="2.6" y="3.4" width="3.4" height="2.8" rx=".4" fill="none" stroke="#9aa2aa" stroke-width=".6"/><path d="M3.3 3.4 V2.8 A1 1 0 0 1 5.3 2.8 V3.4" fill="none" stroke="#9aa2aa" stroke-width=".6"/></svg>
<svg style="left:192px;top:228.4px;" width="4" height="6" viewBox="0 0 4 6"><path d="M1 1 L3 3 L1 5" fill="none" stroke="#8a939b" stroke-width=".8"/></svg>
<svg style="left:198.6px;top:227.55px;" width="9" height="7.3" viewBox="0 0 8 6.4"><path d="M.3 .6 H3 L3.7 1.5 H7.7 V6.1 H.3 Z" fill="#2f96e6"/></svg>
<div class="t" style="left:209.8px;top:225.4px;height:12px;line-height:12px;font-size:6.25px;color:#4b545c;">テスト</div>
<div style="left:277.5px;top:228.8px;width:5.2px;height:5.2px;background:#c4c4c4;border-radius:.6px;"></div>
<div class="t" style="left:288px;top:225.4px;height:12px;line-height:12px;font-size:6.2px;color:#555e66;">未着手</div>
<svg style="left:330.2px;top:226.7px;" width="7" height="9.2" viewBox="0 0 7 9.2"><path d="M1.2 9 C1.2 6.8 5.8 6.8 5.8 9 Z" fill="#4a4a4a"/><ellipse cx="3.5" cy="4.2" rx="2.6" ry="2.9" fill="#f8d8be"/><path d="M.7 3.9 C.4 -.3 6.6 -.3 6.3 3.9 C5 2.5 2 2.5 .7 3.9 Z" fill="#6a4a2c"/><path d="M1.2 4.3 H5.8" stroke="#3a3a3a" stroke-width=".8"/></svg>
<div class="t" style="left:342.5px;top:225.4px;height:12px;line-height:12px;font-size:6.25px;color:#4b545c;">沢田 聖監</div>
<svg style="left:398px;top:226.7px;" width="7" height="9.2" viewBox="0 0 7 9.2"><path d="M1.2 9 C1.2 6.8 5.8 6.8 5.8 9 Z" fill="#4a4a4a"/><ellipse cx="3.5" cy="4.2" rx="2.6" ry="2.9" fill="#f8d8be"/><path d="M.7 3.9 C.4 -.3 6.6 -.3 6.3 3.9 C5 2.5 2 2.5 .7 3.9 Z" fill="#6a4a2c"/><path d="M1.2 4.3 H5.8" stroke="#3a3a3a" stroke-width=".8"/></svg>
<div class="t" style="left:406.8px;top:225.4px;height:12px;line-height:12px;font-size:6.25px;color:#4b545c;">沢田 聖監</div>
<div class="t" style="left:461px;top:225.4px;height:12px;line-height:12px;font-size:6.3px;color:#8a9299;"><span class="n">2024/07/15</span></div>
<div class="t" style="left:513px;top:225.4px;height:12px;line-height:12px;font-size:6.3px;color:#8a9299;"><span class="n">2024/08/20</span></div>
<div style="left:575px;top:148.4px;width:230px;height:4.6px;background:linear-gradient(to bottom,#4fb3f4 0,#4fb3f4 24%,#a9dbf9 24%,#a9dbf9 72%,#62bbf5 72%);"></div>
<div style="left:575px;top:148.4px;width:39px;height:4.6px;background:#2196f3;"></div>
<svg style="left:574.5px;top:152px;" width="3" height="3" viewBox="0 0 3 3"><path d="M0 0 H2.4 L0 2.6 Z" fill="#2196f3"/></svg>
<svg style="left:802.5px;top:152px;" width="3" height="3" viewBox="0 0 3 3"><path d="M3 0 H.6 L3 2.6 Z" fill="#2196f3"/></svg>
<div class="t" style="left:810px;top:145.4px;height:12px;line-height:12px;font-size:6.3px;color:#8d959c;"><span class="n">5/27 - 9/24</span></div>
<div style="left:575px;top:174.8px;width:163px;height:4.6px;background:linear-gradient(to bottom,#4fb3f4 0,#4fb3f4 24%,#a9dbf9 24%,#a9dbf9 72%,#62bbf5 72%);"></div>
<div style="left:575px;top:174.8px;width:56px;height:4.6px;background:#2196f3;"></div>
<svg style="left:574.5px;top:178.4px;" width="3" height="3" viewBox="0 0 3 3"><path d="M0 0 H2.4 L0 2.6 Z" fill="#2196f3"/></svg>
<svg style="left:735.5px;top:178.4px;" width="3" height="3" viewBox="0 0 3 3"><path d="M3 0 H.6 L3 2.6 Z" fill="#2196f3"/></svg>
<div class="t" style="left:743px;top:171.8px;height:12px;line-height:12px;font-size:6.3px;color:#8d959c;"><span class="n">5/27 - 8/20</span></div>
<div style="left:575px;top:188px;width:31.5px;height:4.6px;background:#b5e594;border-top:.9px solid #86d456;border-bottom:.5px solid #86d456;"></div>
<svg style="left:574.5px;top:191.6px;" width="3" height="3" viewBox="0 0 3 3"><path d="M0 0 H2.4 L0 2.6 Z" fill="#86d456"/></svg>
<svg style="left:604px;top:191.6px;" width="3" height="3" viewBox="0 0 3 3"><path d="M3 0 H.6 L3 2.6 Z" fill="#86d456"/></svg>
<div class="t" style="left:611.5px;top:185px;height:12px;line-height:12px;font-size:6.3px;color:#8d959c;"><span class="n">5/27 - 6/11</span></div>
<div style="left:606px;top:201.2px;width:19.5px;height:4.6px;background:#b5e594;border-top:.9px solid #86d456;border-bottom:.5px solid #86d456;"></div>
<svg style="left:605.5px;top:204.8px;" width="3" height="3" viewBox="0 0 3 3"><path d="M0 0 H2.4 L0 2.6 Z" fill="#86d456"/></svg>
<svg style="left:623px;top:204.8px;" width="3" height="3" viewBox="0 0 3 3"><path d="M3 0 H.6 L3 2.6 Z" fill="#86d456"/></svg>
<div class="t" style="left:630.5px;top:198.2px;height:12px;line-height:12px;font-size:6.3px;color:#8d959c;"><span class="n">6/12 - 6/21</span></div>
<div class="t" style="left:563.5px;top:197.5px;height:12px;line-height:12px;font-size:6.1px;color:#8a9299;">佐藤 大輔</div>
<div style="left:616px;top:214.4px;width:45px;height:4.6px;background:linear-gradient(to bottom,#4fb3f4 0,#4fb3f4 24%,#a9dbf9 24%,#a9dbf9 72%,#62bbf5 72%);"></div>
<div style="left:616px;top:214.4px;width:22px;height:4.6px;background:#2196f3;"></div>
<svg style="left:615.5px;top:218px;" width="3" height="3" viewBox="0 0 3 3"><path d="M0 0 H2.4 L0 2.6 Z" fill="#2196f3"/></svg>
<svg style="left:658.5px;top:218px;" width="3" height="3" viewBox="0 0 3 3"><path d="M3 0 H.6 L3 2.6 Z" fill="#2196f3"/></svg>
<div class="t" style="left:666px;top:211.4px;height:12px;line-height:12px;font-size:6.3px;color:#8d959c;"><span class="n">6/17 - 7/10</span></div>
<div class="t" style="left:563.5px;top:210.7px;height:12px;line-height:12px;font-size:6.1px;color:#8a9299;">作:沢田 聖監</div>
<div style="left:669px;top:227.6px;width:69px;height:4.6px;background:linear-gradient(to bottom,#4fb3f4 0,#4fb3f4 24%,#a9dbf9 24%,#a9dbf9 72%,#62bbf5 72%);"></div>
<svg style="left:668.5px;top:231.2px;" width="3" height="3" viewBox="0 0 3 3"><path d="M0 0 H2.4 L0 2.6 Z" fill="#2196f3"/></svg>
<svg style="left:735.5px;top:231.2px;" width="3" height="3" viewBox="0 0 3 3"><path d="M3 0 H.6 L3 2.6 Z" fill="#2196f3"/></svg>
<div class="t" style="left:743px;top:224.6px;height:12px;line-height:12px;font-size:6.3px;color:#8d959c;"><span class="n">7/15 - 8/20</span></div>
<div class="t" style="left:605px;top:223.9px;height:12px;line-height:12px;font-size:6.1px;color:#8a9299;">テスト:沢田 聖監</div>
<div style="left:623.4px;top:143px;width:0.7px;height:101px;background:repeating-linear-gradient(to bottom,#a9a9a9 0,#a9a9a9 1.3px,transparent 1.3px,transparent 2.6px);"></div>
<svg style="left:620.3px;top:137px;" width="7" height="8" viewBox="0 0 7 8"><circle cx="3.5" cy="3.4" r="2.5" fill="#fff" stroke="#f2604e" stroke-width="1.3"/><path d="M2.4 6 L3.5 7.6 L4.6 6" fill="#f2604e"/></svg>
<div style="left:137.5px;top:243.2px;width:703px;height:8px;background:#fff;"></div>
<div style="left:561px;top:243.2px;width:1.6px;height:6px;background:#cfd2d5;"></div>
<div style="left:140px;top:244.4px;width:207px;height:4.6px;background:#707070;border-radius:2.3px;"></div>
<div style="left:589px;top:244.7px;width:15px;height:4.2px;background:#7a7a7a;border-radius:2.1px;"></div>
<div style="left:137.5px;top:251px;width:703px;height:0.7px;background:#dcdfe2;"></div>
<svg style="left:142.5px;top:257.5px;" width="9" height="7" viewBox="0 0 9 7"><circle cx="3" cy="2" r="1.5" fill="none" stroke="#737c84" stroke-width=".7"/><path d="M.6 6.4 C.6 3.8 5.4 3.8 5.4 6.4" fill="none" stroke="#737c84" stroke-width=".7"/><circle cx="7" cy="5.2" r="1.3" fill="#737c84"/></svg>
<svg style="left:161px;top:257.5px;" width="7" height="7" viewBox="0 0 7 7"><path d="M1 .8 H6 M1 6.4 H6 M3.5 .8 V6.4" stroke="#737c84" stroke-width=".8"/></svg>
<svg style="left:179px;top:257.5px;" width="6" height="7" viewBox="0 0 6 7"><path d="M3 .8 V6.4 M1 3.4 H5" stroke="#9aa2aa" stroke-width=".7"/><circle cx="3" cy="1" r=".7" fill="#9aa2aa"/></svg>
<div style="left:193.5px;top:256.5px;width:0.6px;height:9px;background:#e4e7ea;"></div>
<svg style="left:200.5px;top:257.8px;" width="8" height="7" viewBox="0 0 8 7"><path d="M3.6 .8 L1 3.5 L3.6 6.2 M6.8 .8 L4.2 3.5 L6.8 6.2" fill="none" stroke="#7b848c" stroke-width=".9"/></svg>
<svg style="left:218.5px;top:257.5px;" width="7" height="7.5" viewBox="0 0 7 7.5"><rect x=".7" y="1.3" width="5.6" height="5.4" rx=".6" fill="none" stroke="#8a939b" stroke-width=".7"/><path d="M.7 2.9 H6.3 M2.2 .5 V1.8 M4.8 .5 V1.8" stroke="#8a939b" stroke-width=".7"/></svg>
<div class="t" style="left:228.4px;top:255.3px;height:12px;line-height:12px;font-size:6.5px;color:#2a3138;font-weight:700;"><span class="n">06/17 - 08/19</span></div>
<svg style="left:281px;top:258.8px;" width="6" height="5" viewBox="0 0 6 5"><path d="M1 1.2 L3 3.4 L5 1.2" fill="none" stroke="#9aa2aa" stroke-width="0.7"/></svg>
<svg style="left:297.5px;top:257.8px;" width="8" height="7" viewBox="0 0 8 7"><path d="M1.2 .8 L3.8 3.5 L1.2 6.2 M4.4 .8 L7 3.5 L4.4 6.2" fill="none" stroke="#6b747c" stroke-width=".9"/></svg>
<div style="left:313.5px;top:256.5px;width:0.6px;height:9px;background:#e4e7ea;"></div>
<div style="left:319px;top:255.4px;width:11.2px;height:11.2px;background:#d9ecfb;border:.6px solid #d9ecfb;border-radius:50%;"></div>
<svg style="left:321.3px;top:257.5px;" width="6.6" height="7" viewBox="0 0 6.6 7"><rect x=".7" y=".7" width="5.2" height="5.6" rx=".6" fill="none" stroke="#2b8be0" stroke-width=".8"/><path d="M2 3.6 L3 4.6 L4.8 2.6" fill="none" stroke="#2b8be0" stroke-width=".7"/></svg>
<div style="left:336.4px;top:255.4px;width:11.2px;height:11.2px;background:#d9ecfb;border:.6px solid #d9ecfb;border-radius:50%;"></div>
<svg style="left:338.6px;top:257.5px;" width="7" height="7" viewBox="0 0 7 7"><path d="M1 6.2 V3 H3 V6.2 M4 6.2 V1.6 H6 V6.2 M.4 6.4 H6.6" fill="none" stroke="#2b8be0" stroke-width=".8"/></svg>
<div style="left:353px;top:256.5px;width:0.6px;height:9px;background:#e4e7ea;"></div>
<div style="left:358.7px;top:255.4px;width:11.2px;height:11.2px;background:#fff;border:.6px solid #dfe3e7;border-radius:50%;"></div>
<svg style="left:361px;top:257.8px;" width="7" height="6.5" viewBox="0 0 7 6.5"><circle cx="2.6" cy="1.8" r="1.2" fill="none" stroke="#9aa2aa" stroke-width=".6"/><path d="M.6 5.8 C.6 3.6 4.6 3.6 4.6 5.8 Z" fill="none" stroke="#9aa2aa" stroke-width=".6"/><path d="M5 3.4 C6.4 3.6 6.6 4.6 6.6 5.8" fill="none" stroke="#9aa2aa" stroke-width=".6"/></svg>
<div style="left:376.7px;top:255.4px;width:11.2px;height:11.2px;background:#d9ecfb;border:.6px solid #d9ecfb;border-radius:50%;"></div>
<svg style="left:378.8px;top:257.5px;" width="7" height="7" viewBox="0 0 7 7"><path d="M3.5 .6 L6.2 2.1 V4.9 L3.5 6.4 L.8 4.9 V2.1 Z M.8 2.1 L3.5 3.6 L6.2 2.1 M3.5 3.6 V6.4" fill="none" stroke="#2b8be0" stroke-width=".7"/></svg>
<div style="left:394px;top:256.5px;width:0.6px;height:9px;background:#e4e7ea;"></div>
<svg style="left:400.5px;top:257.5px;" width="7" height="7" viewBox="0 0 7 7"><circle cx="3.5" cy="3.5" r="2.5" fill="none" stroke="#8a939b" stroke-width="1" stroke-dasharray="1.2 .8"/><circle cx="3.5" cy="3.5" r="1" fill="none" stroke="#8a939b" stroke-width=".6"/></svg>
<div class="t" style="left:411.8px;top:255px;height:12px;line-height:12px;font-size:5.8px;color:#4b545c;font-weight:700;">表示項目</div>
<svg style="left:438px;top:258.8px;" width="6" height="5" viewBox="0 0 6 5"><path d="M1 1.2 L3 3.4 L5 1.2" fill="none" stroke="#9aa2aa" stroke-width="0.7"/></svg>
<div style="left:718.5px;top:260px;width:3px;height:0.7px;background:#737c84;"></div>
<div style="left:727px;top:259.2px;width:51px;height:3.2px;background:#fff;border:.6px solid #d0d4d8;border-radius:1.6px;"></div>
<div style="left:726px;top:257.8px;width:6px;height:6px;background:#fff;border:.6px solid #b0b6bc;border-radius:50%;"></div>
<div style="left:728px;top:259.8px;width:2px;height:2px;background:#444;border-radius:50%;"></div>
<svg style="left:781px;top:258.5px;" width="4" height="4" viewBox="0 0 4 4"><path d="M2 .3 V3.7 M.3 2 H3.7" stroke="#737c84" stroke-width=".7"/></svg>
<div style="left:791px;top:256.5px;width:0.6px;height:9px;background:#e4e7ea;"></div>
<svg style="left:800px;top:257px;" width="8" height="8" viewBox="0 0 8 8"><path d="M6.6 4.6 A2.8 2.8 0 1 1 5.4 2" fill="none" stroke="#8a939b" stroke-width=".8"/><path d="M7.4 3.2 L6.6 4.8 L5.2 3.9" fill="none" stroke="#8a939b" stroke-width=".7"/></svg>
<div style="left:815px;top:256.5px;width:0.6px;height:9px;background:#e4e7ea;"></div>
<div style="left:825.4px;top:257.6px;width:1.3px;height:1.3px;background:#5b646c;border-radius:50%;"></div>
<div style="left:825.4px;top:260.2px;width:1.3px;height:1.3px;background:#5b646c;border-radius:50%;"></div>
<div style="left:825.4px;top:262.8px;width:1.3px;height:1.3px;background:#5b646c;border-radius:50%;"></div>
<div style="left:137.5px;top:268.1px;width:703px;height:32.1px;background:#f3f3f3;border-top:.7px solid #dcdcdc;border-bottom:.7px solid #dcdcdc;"></div>
<div style="left:234px;top:283.8px;width:606px;height:0.6px;background:#e0e0e0;"></div>
<div class="t" style="left:143.5px;top:278.3px;height:12px;line-height:12px;font-size:6.2px;color:#6b747c;">リソース名</div>
<div style="left:137.5px;top:300.2px;width:96px;height:72.8px;background:#deedfa;"></div>
<div style="left:392.25px;top:300.2px;width:31.55px;height:182px;background:#f5f5f5;"></div>
<div style="left:423.8px;top:300.2px;width:31.55px;height:182px;background:#f5f5f5;"></div>
<div style="left:613.1px;top:300.2px;width:31.55px;height:182px;background:#f5f5f5;"></div>
<div style="left:644.65px;top:300.2px;width:31.55px;height:182px;background:#f5f5f5;"></div>
<div style="left:833.95px;top:300.2px;width:31.55px;height:182px;background:#f5f5f5;"></div>
<div style="left:234.5px;top:268.1px;width:0.6px;height:213.9px;background:#e9e9e9;"></div>
<div style="left:266.05px;top:283.8px;width:0.6px;height:198.2px;background:#e9e9e9;"></div>
<div style="left:297.6px;top:283.8px;width:0.6px;height:198.2px;background:#e9e9e9;"></div>
<div style="left:329.15px;top:283.8px;width:0.6px;height:198.2px;background:#e9e9e9;"></div>
<div style="left:360.7px;top:283.8px;width:0.6px;height:198.2px;background:#e9e9e9;"></div>
<div style="left:392.25px;top:283.8px;width:0.6px;height:198.2px;background:#e9e9e9;"></div>
<div style="left:423.8px;top:283.8px;width:0.6px;height:198.2px;background:#e9e9e9;"></div>
<div style="left:455.35px;top:268.1px;width:0.6px;height:213.9px;background:#e9e9e9;"></div>
<div style="left:486.9px;top:283.8px;width:0.6px;height:198.2px;background:#e9e9e9;"></div>
<div style="left:518.45px;top:283.8px;width:0.6px;height:198.2px;background:#e9e9e9;"></div>
<div style="left:550px;top:283.8px;width:0.6px;height:198.2px;background:#e9e9e9;"></div>
<div style="left:581.55px;top:283.8px;width:0.6px;height:198.2px;background:#e9e9e9;"></div>
<div style="left:613.1px;top:283.8px;width:0.6px;height:198.2px;background:#e9e9e9;"></div>
<div style="left:644.65px;top:283.8px;width:0.6px;height:198.2px;background:#e9e9e9;"></div>
<div style="left:676.2px;top:268.1px;width:0.6px;height:213.9px;background:#e9e9e9;"></div>
<div style="left:707.75px;top:283.8px;width:0.6px;height:198.2px;background:#e9e9e9;"></div>
<div style="left:739.3px;top:283.8px;width:0.6px;height:198.2px;background:#e9e9e9;"></div>
<div style="left:770.85px;top:283.8px;width:0.6px;height:198.2px;background:#e9e9e9;"></div>
<div style="left:802.4px;top:283.8px;width:0.6px;height:198.2px;background:#e9e9e9;"></div>
<div style="left:833.95px;top:283.8px;width:0.6px;height:198.2px;background:#e9e9e9;"></div>
<div style="left:137.5px;top:373px;width:703px;height:0.6px;background:#e0e0e0;"></div>
<div style="left:137.5px;top:418.6px;width:703px;height:0.6px;background:#e0e0e0;"></div>
<div style="left:137.5px;top:434.6px;width:703px;height:0.6px;background:#e0e0e0;"></div>
<div style="left:137.5px;top:450.4px;width:703px;height:0.6px;background:#e0e0e0;"></div>
<div style="left:137.5px;top:466.2px;width:703px;height:0.6px;background:#e0e0e0;"></div>
<div style="left:137.5px;top:482px;width:703px;height:0.6px;background:#e0e0e0;"></div>
<div style="left:137.5px;top:482.6px;width:703px;height:3px;background:#fff;"></div>
<div class="t" style="left:241.5px;top:270.2px;height:12px;line-height:12px;font-size:6.1px;color:#6b747c;"><span class="n">2024</span>年<span class="n">6</span>月<span class="n">17</span>日</div>
<div class="t" style="left:462.35px;top:270.2px;height:12px;line-height:12px;font-size:6.1px;color:#6b747c;"><span class="n">2024</span>年<span class="n">6</span>月<span class="n">24</span>日</div>
<div class="t" style="left:683.2px;top:270.2px;height:12px;line-height:12px;font-size:6.1px;color:#6b747c;"><span class="n">2024</span>年<span class="n">7</span>月<span class="n">1</span>日</div>
<div class="t" style="left:234.5px;top:285.4px;height:12px;line-height:12px;font-size:6px;color:#6b747c;width:31.55px;text-align:center;">月</div>
<div class="t" style="left:266.05px;top:285.4px;height:12px;line-height:12px;font-size:6px;color:#6b747c;width:31.55px;text-align:center;">火</div>
<div class="t" style="left:297.6px;top:285.4px;height:12px;line-height:12px;font-size:6px;color:#6b747c;width:31.55px;text-align:center;">水</div>
<div class="t" style="left:329.15px;top:285.4px;height:12px;line-height:12px;font-size:6px;color:#6b747c;width:31.55px;text-align:center;">木</div>
<div class="t" style="left:360.7px;top:285.4px;height:12px;line-height:12px;font-size:6px;color:#6b747c;width:31.55px;text-align:center;">金</div>
<div class="t" style="left:392.25px;top:285.4px;height:12px;line-height:12px;font-size:6px;color:#6b747c;width:31.55px;text-align:center;">土</div>
<div class="t" style="left:423.8px;top:285.4px;height:12px;line-height:12px;font-size:6px;color:#6b747c;width:31.55px;text-align:center;">日</div>
<div class="t" style="left:455.35px;top:285.4px;height:12px;line-height:12px;font-size:6px;color:#6b747c;width:31.55px;text-align:center;">月</div>
<div class="t" style="left:486.9px;top:285.4px;height:12px;line-height:12px;font-size:6px;color:#6b747c;width:31.55px;text-align:center;">火</div>
<div class="t" style="left:518.45px;top:285.4px;height:12px;line-height:12px;font-size:6px;color:#6b747c;width:31.55px;text-align:center;">水</div>
<div class="t" style="left:550px;top:285.4px;height:12px;line-height:12px;font-size:6px;color:#6b747c;width:31.55px;text-align:center;">木</div>
<div class="t" style="left:581.55px;top:285.4px;height:12px;line-height:12px;font-size:6px;color:#6b747c;width:31.55px;text-align:center;">金</div>
<div class="t" style="left:613.1px;top:285.4px;height:12px;line-height:12px;font-size:6px;color:#6b747c;width:31.55px;text-align:center;">土</div>
<div class="t" style="left:644.65px;top:285.4px;height:12px;line-height:12px;font-size:6px;color:#6b747c;width:31.55px;text-align:center;">日</div>
<div class="t" style="left:676.2px;top:285.4px;height:12px;line-height:12px;font-size:6px;color:#6b747c;width:31.55px;text-align:center;">月</div>
<div class="t" style="left:707.75px;top:285.4px;height:12px;line-height:12px;font-size:6px;color:#6b747c;width:31.55px;text-align:center;">火</div>
<div class="t" style="left:739.3px;top:285.4px;height:12px;line-height:12px;font-size:6px;color:#6b747c;width:31.55px;text-align:center;">水</div>
<div class="t" style="left:770.85px;top:285.4px;height:12px;line-height:12px;font-size:6px;color:#6b747c;width:31.55px;text-align:center;">木</div>
<div class="t" style="left:802.4px;top:285.4px;height:12px;line-height:12px;font-size:6px;color:#6b747c;width:31.55px;text-align:center;">金</div>
<div style="left:232.4px;top:268.1px;width:2.2px;height:214px;background:#d6d6d6;"></div>
<svg style="left:144.5px;top:305.5px;" width="6" height="5" viewBox="0 0 6 5"><path d="M1 1.2 L3 3.4 L5 1.2" fill="none" stroke="#9aa2aa" stroke-width="0.7"/></svg>
<svg style="left:155.2px;top:303.5px;" width="9" height="9" viewBox="0 0 9 9"><circle cx="4.5" cy="4.5" r="3.6" fill="#fff" stroke="#f08a4a" stroke-width="1.5"/><circle cx="4.5" cy="4.5" r="1.6" fill="#f6b48a"/></svg>
<div class="t" style="left:166.5px;top:302px;height:12px;line-height:12px;font-size:6.25px;color:#4b545c;">藤田 尚子</div>
<svg style="left:155.5px;top:319.3px;" width="7.4" height="8.2" viewBox="0 0 7 7.5"><rect x=".6" y="1.2" width="5.8" height="5.6" rx=".6" fill="none" stroke="#6b747c" stroke-width=".6"/><path d="M2.2 .4 V2 M4.8 .4 V2 M3.5 1.2 V6.8" stroke="#6b747c" stroke-width=".6"/></svg>
<div class="t" style="left:167px;top:317.4px;height:12px;line-height:12px;font-size:6.25px;color:#4b545c;"><span class="n">15 </span>件</div>
<svg style="left:144.5px;top:378.5px;" width="6" height="5" viewBox="0 0 6 5"><path d="M1 1.2 L3 3.4 L5 1.2" fill="none" stroke="#9aa2aa" stroke-width="0.7"/></svg>
<svg style="left:156.2px;top:376.3px;" width="7" height="9.2" viewBox="0 0 7 9.2"><path d="M1.2 9 C1.2 6.8 5.8 6.8 5.8 9 Z" fill="#4a4a4a"/><ellipse cx="3.5" cy="4.2" rx="2.6" ry="2.9" fill="#f8d8be"/><path d="M.7 3.9 C.4 -.3 6.6 -.3 6.3 3.9 C5 2.5 2 2.5 .7 3.9 Z" fill="#6a4a2c"/><path d="M1.2 4.3 H5.8" stroke="#3a3a3a" stroke-width=".8"/></svg>
<div class="t" style="left:166.5px;top:375px;height:12px;line-height:12px;font-size:6.25px;color:#4b545c;">沢田 聖監</div>
<svg style="left:146px;top:423.6px;" width="4" height="6" viewBox="0 0 4 6"><path d="M1 1 L3 3 L1 5" fill="none" stroke="#9aa2aa" stroke-width=".8"/></svg>
<svg style="left:156.2px;top:421.7px;" width="7" height="9.2" viewBox="0 0 7 9.2"><path d="M1.2 9 C1.2 6.8 5.8 6.8 5.8 9 Z" fill="#e2574a"/><ellipse cx="3.5" cy="4.2" rx="2.6" ry="2.9" fill="#f8d8be"/><path d="M.7 3.9 C.4 -.3 6.6 -.3 6.3 3.9 C5 2.5 2 2.5 .7 3.9 Z" fill="#f0a878"/></svg>
<div class="t" style="left:166.5px;top:420.6px;height:12px;line-height:12px;font-size:6.25px;color:#4b545c;">高木 拓也</div>
<svg style="left:146px;top:439.5px;" width="4" height="6" viewBox="0 0 4 6"><path d="M1 1 L3 3 L1 5" fill="none" stroke="#9aa2aa" stroke-width=".8"/></svg>
<svg style="left:156.2px;top:437.5px;" width="7" height="9.2" viewBox="0 0 7 9.2"><path d="M1.2 9 C1.2 6.8 5.8 6.8 5.8 9 Z" fill="#3c3c3c"/><ellipse cx="3.5" cy="4.2" rx="2.6" ry="2.9" fill="#f8d8be"/><path d="M.7 3.9 C.4 -.3 6.6 -.3 6.3 3.9 C5 2.5 2 2.5 .7 3.9 Z" fill="#1c1c1c"/></svg>
<div class="t" style="left:166.5px;top:436.5px;height:12px;line-height:12px;font-size:6.25px;color:#4b545c;">山下 直樹</div>
<svg style="left:146px;top:455.3px;" width="4" height="6" viewBox="0 0 4 6"><path d="M1 1 L3 3 L1 5" fill="none" stroke="#9aa2aa" stroke-width=".8"/></svg>
<svg style="left:155.6px;top:454.1px;" width="8.4" height="8.4" viewBox="0 0 8.4 8.4"><circle cx="4.2" cy="4.2" r="3.9" fill="#5aac5a"/><circle cx="4.2" cy="4.2" r="2.7" fill="#2f6f3a"/><circle cx="4.2" cy="3.3" r="1" fill="#fff"/><path d="M2.4 6.4 C2.4 4.2 6 4.2 6 6.4 Z" fill="#fff"/></svg>
<div class="t" style="left:166.5px;top:452.3px;height:12px;line-height:12px;font-size:6.25px;color:#4b545c;">村田 駿</div>
<svg style="left:146px;top:471.2px;" width="4" height="6" viewBox="0 0 4 6"><path d="M1 1 L3 3 L1 5" fill="none" stroke="#9aa2aa" stroke-width=".8"/></svg>
<svg style="left:155.6px;top:469.8px;" width="8.4" height="8.4" viewBox="0 0 8.4 8.4"><circle cx="4.2" cy="4.2" r="3.9" fill="#3a94dc"/><circle cx="4.2" cy="4.2" r="2.7" fill="#3a94dc"/><circle cx="4.2" cy="3.3" r="1" fill="#fff"/><path d="M2.4 6.4 C2.4 4.2 6 4.2 6 6.4 Z" fill="#fff"/></svg>
<div class="t" style="left:166.5px;top:468.2px;height:12px;line-height:12px;font-size:6.25px;color:#4b545c;">高田 伸二</div>
<div style="left:236.1px;top:304.4px;width:28.85px;height:10px;background:#82c7fd;border-radius:1.2px;"></div>
<div class="t" style="left:236.1px;top:303.2px;height:8px;line-height:8px;font-size:5.7px;color:#4f86bd;width:28.85px;text-align:center;"><span class="n">8</span></div>
<div style="left:267.65px;top:304.4px;width:28.85px;height:10px;background:#82c7fd;border-radius:1.2px;"></div>
<div class="t" style="left:267.65px;top:303.2px;height:8px;line-height:8px;font-size:5.7px;color:#4f86bd;width:28.85px;text-align:center;"><span class="n">8</span></div>
<div style="left:299.2px;top:304.4px;width:28.85px;height:10px;background:#82c7fd;border-radius:1.2px;"></div>
<div class="t" style="left:299.2px;top:303.2px;height:8px;line-height:8px;font-size:5.7px;color:#4f86bd;width:28.85px;text-align:center;"><span class="n">8</span></div>
<div style="left:330.75px;top:304.4px;width:28.85px;height:10px;background:#82c7fd;border-radius:1.2px;"></div>
<div class="t" style="left:330.75px;top:303.2px;height:8px;line-height:8px;font-size:5.7px;color:#4f86bd;width:28.85px;text-align:center;"><span class="n">8</span></div>
<div style="left:362.3px;top:304.4px;width:28.85px;height:10px;background:#82c7fd;border-radius:1.2px;"></div>
<div class="t" style="left:362.3px;top:303.2px;height:8px;line-height:8px;font-size:5.7px;color:#4f86bd;width:28.85px;text-align:center;"><span class="n">8</span></div>
<div style="left:456.95px;top:306.4px;width:28.85px;height:8px;background:#82c7fd;border-radius:1.2px;"></div>
<div class="t" style="left:456.95px;top:303.2px;height:8px;line-height:8px;font-size:5.7px;color:#4f86bd;width:28.85px;text-align:center;"><span class="n">7</span></div>
<div style="left:488.5px;top:306.4px;width:28.85px;height:8px;background:#82c7fd;border-radius:1.2px;"></div>
<div class="t" style="left:488.5px;top:303.2px;height:8px;line-height:8px;font-size:5.7px;color:#4f86bd;width:28.85px;text-align:center;"><span class="n">7</span></div>
<div style="left:520.05px;top:306.4px;width:28.85px;height:8px;background:#82c7fd;border-radius:1.2px;"></div>
<div class="t" style="left:520.05px;top:303.2px;height:8px;line-height:8px;font-size:5.7px;color:#4f86bd;width:28.85px;text-align:center;"><span class="n">7</span></div>
<div style="left:551.6px;top:306.4px;width:28.85px;height:8px;background:#82c7fd;border-radius:1.2px;"></div>
<div class="t" style="left:551.6px;top:303.2px;height:8px;line-height:8px;font-size:5.7px;color:#4f86bd;width:28.85px;text-align:center;"><span class="n">7</span></div>
<div style="left:583.15px;top:306.4px;width:28.85px;height:8px;background:#82c7fd;border-radius:1.2px;"></div>
<div class="t" style="left:583.15px;top:303.2px;height:8px;line-height:8px;font-size:5.7px;color:#4f86bd;width:28.85px;text-align:center;"><span class="n">7</span></div>
<div style="left:677.8px;top:304.4px;width:28.85px;height:10px;background:#82c7fd;border-radius:1.2px;"></div>
<div class="t" style="left:677.8px;top:303.2px;height:8px;line-height:8px;font-size:5.7px;color:#4f86bd;width:28.85px;text-align:center;"><span class="n">8</span></div>
<div style="left:709.35px;top:304.4px;width:28.85px;height:10px;background:#82c7fd;border-radius:1.2px;"></div>
<div class="t" style="left:709.35px;top:303.2px;height:8px;line-height:8px;font-size:5.7px;color:#4f86bd;width:28.85px;text-align:center;"><span class="n">8</span></div>
<div style="left:740.9px;top:306.4px;width:28.85px;height:8px;background:#82c7fd;border-radius:1.2px;"></div>
<div class="t" style="left:740.9px;top:303.2px;height:8px;line-height:8px;font-size:5.7px;color:#4f86bd;width:28.85px;text-align:center;"><span class="n">7</span></div>
<div style="left:772.45px;top:312.2px;width:28.85px;height:2.2px;background:#82c7fd;border-radius:1.2px;"></div>
<div class="t" style="left:772.45px;top:303.2px;height:8px;line-height:8px;font-size:5.7px;color:#4f86bd;width:28.85px;text-align:center;"><span class="n">3</span></div>
<div style="left:804px;top:312.2px;width:28.85px;height:2.2px;background:#82c7fd;border-radius:1.2px;"></div>
<div class="t" style="left:804px;top:303.2px;height:8px;line-height:8px;font-size:5.7px;color:#4f86bd;width:28.85px;text-align:center;"><span class="n">3</span></div>
<div style="left:236.1px;top:375.9px;width:28.85px;height:11.3px;background:#82c7fd;border-radius:1.2px;"></div>
<div class="t" style="left:236.1px;top:376px;height:8px;line-height:8px;font-size:5.7px;color:#4f86bd;width:28.85px;text-align:center;"><span class="n">9</span></div>
<div style="left:267.65px;top:375.9px;width:28.85px;height:11.3px;background:#82c7fd;border-radius:1.2px;"></div>
<div class="t" style="left:267.65px;top:376px;height:8px;line-height:8px;font-size:5.7px;color:#4f86bd;width:28.85px;text-align:center;"><span class="n">9</span></div>
<div style="left:299.2px;top:375.9px;width:28.85px;height:11.3px;background:#82c7fd;border-radius:1.2px;"></div>
<div class="t" style="left:299.2px;top:376px;height:8px;line-height:8px;font-size:5.7px;color:#4f86bd;width:28.85px;text-align:center;"><span class="n">9</span></div>
<div style="left:330.75px;top:375.9px;width:28.85px;height:11.3px;background:#82c7fd;border-radius:1.2px;"></div>
<div class="t" style="left:330.75px;top:376px;height:8px;line-height:8px;font-size:5.7px;color:#4f86bd;width:28.85px;text-align:center;"><span class="n">9</span></div>
<div style="left:362.3px;top:375.9px;width:28.85px;height:11.3px;background:#82c7fd;border-radius:1.2px;"></div>
<div class="t" style="left:362.3px;top:376px;height:8px;line-height:8px;font-size:5.7px;color:#4f86bd;width:28.85px;text-align:center;"><span class="n">9</span></div>
<div style="left:456.95px;top:379.2px;width:28.85px;height:8px;background:#82c7fd;border-radius:1.2px;"></div>
<div class="t" style="left:456.95px;top:376px;height:8px;line-height:8px;font-size:5.7px;color:#4f86bd;width:28.85px;text-align:center;"><span class="n">7</span></div>
<div style="left:488.5px;top:379.2px;width:28.85px;height:8px;background:#82c7fd;border-radius:1.2px;"></div>
<div class="t" style="left:488.5px;top:376px;height:8px;line-height:8px;font-size:5.7px;color:#4f86bd;width:28.85px;text-align:center;"><span class="n">7</span></div>
<div style="left:520.05px;top:379.2px;width:28.85px;height:8px;background:#82c7fd;border-radius:1.2px;"></div>
<div class="t" style="left:520.05px;top:376px;height:8px;line-height:8px;font-size:5.7px;color:#4f86bd;width:28.85px;text-align:center;"><span class="n">7</span></div>
<div style="left:551.6px;top:379.2px;width:28.85px;height:8px;background:#82c7fd;border-radius:1.2px;"></div>
<div class="t" style="left:551.6px;top:376px;height:8px;line-height:8px;font-size:5.7px;color:#4f86bd;width:28.85px;text-align:center;"><span class="n">7</span></div>
<div style="left:583.15px;top:379.2px;width:28.85px;height:8px;background:#82c7fd;border-radius:1.2px;"></div>
<div class="t" style="left:583.15px;top:376px;height:8px;line-height:8px;font-size:5.7px;color:#4f86bd;width:28.85px;text-align:center;"><span class="n">7</span></div>
<div style="left:677.8px;top:379.2px;width:28.85px;height:8px;background:#82c7fd;border-radius:1.2px;"></div>
<div class="t" style="left:677.8px;top:376px;height:8px;line-height:8px;font-size:5.7px;color:#4f86bd;width:28.85px;text-align:center;"><span class="n">7</span></div>
<div style="left:709.35px;top:377.2px;width:28.85px;height:10px;background:#82c7fd;border-radius:1.2px;"></div>
<div class="t" style="left:709.35px;top:376px;height:8px;line-height:8px;font-size:5.7px;color:#4f86bd;width:28.85px;text-align:center;"><span class="n">8</span></div>
<div style="left:740.9px;top:377.2px;width:28.85px;height:10px;background:#82c7fd;border-radius:1.2px;"></div>
<div class="t" style="left:740.9px;top:376px;height:8px;line-height:8px;font-size:5.7px;color:#4f86bd;width:28.85px;text-align:center;"><span class="n">8</span></div>
<div style="left:772.45px;top:377.2px;width:28.85px;height:10px;background:#82c7fd;border-radius:1.2px;"></div>
<div class="t" style="left:772.45px;top:376px;height:8px;line-height:8px;font-size:5.7px;color:#4f86bd;width:28.85px;text-align:center;"><span class="n">8</span></div>
<div style="left:804px;top:377.2px;width:28.85px;height:10px;background:#82c7fd;border-radius:1.2px;"></div>
<div class="t" style="left:804px;top:376px;height:8px;line-height:8px;font-size:5.7px;color:#4f86bd;width:28.85px;text-align:center;"><span class="n">8</span></div>
<div style="left:236.1px;top:424.8px;width:28.85px;height:8px;background:#82c7fd;border-radius:1.2px;"></div>
<div class="t" style="left:236.1px;top:421.6px;height:8px;line-height:8px;font-size:5.7px;color:#4f86bd;width:28.85px;text-align:center;"><span class="n">7</span></div>
<div style="left:267.65px;top:424.8px;width:28.85px;height:8px;background:#82c7fd;border-radius:1.2px;"></div>
<div class="t" style="left:267.65px;top:421.6px;height:8px;line-height:8px;font-size:5.7px;color:#4f86bd;width:28.85px;text-align:center;"><span class="n">7</span></div>
<div style="left:299.2px;top:424.8px;width:28.85px;height:8px;background:#82c7fd;border-radius:1.2px;"></div>
<div class="t" style="left:299.2px;top:421.6px;height:8px;line-height:8px;font-size:5.7px;color:#4f86bd;width:28.85px;text-align:center;"><span class="n">7</span></div>
<div style="left:330.75px;top:424.8px;width:28.85px;height:8px;background:#82c7fd;border-radius:1.2px;"></div>
<div class="t" style="left:330.75px;top:421.6px;height:8px;line-height:8px;font-size:5.7px;color:#4f86bd;width:28.85px;text-align:center;"><span class="n">7</span></div>
<div style="left:362.3px;top:424.8px;width:28.85px;height:8px;background:#82c7fd;border-radius:1.2px;"></div>
<div class="t" style="left:362.3px;top:421.6px;height:8px;line-height:8px;font-size:5.7px;color:#4f86bd;width:28.85px;text-align:center;"><span class="n">7</span></div>
<div style="left:456.95px;top:421.5px;width:28.85px;height:11.3px;background:#82c7fd;border-radius:1.2px;"></div>
<div class="t" style="left:456.95px;top:421.6px;height:8px;line-height:8px;font-size:5.7px;color:#4f86bd;width:28.85px;text-align:center;"><span class="n">9</span></div>
<div style="left:488.5px;top:421.5px;width:28.85px;height:11.3px;background:#82c7fd;border-radius:1.2px;"></div>
<div class="t" style="left:488.5px;top:421.6px;height:8px;line-height:8px;font-size:5.7px;color:#4f86bd;width:28.85px;text-align:center;"><span class="n">9</span></div>
<div style="left:520.05px;top:424.8px;width:28.85px;height:8px;background:#82c7fd;border-radius:1.2px;"></div>
<div class="t" style="left:520.05px;top:421.6px;height:8px;line-height:8px;font-size:5.7px;color:#4f86bd;width:28.85px;text-align:center;"><span class="n">7</span></div>
<div style="left:551.6px;top:424.8px;width:28.85px;height:8px;background:#82c7fd;border-radius:1.2px;"></div>
<div class="t" style="left:551.6px;top:421.6px;height:8px;line-height:8px;font-size:5.7px;color:#4f86bd;width:28.85px;text-align:center;"><span class="n">7</span></div>
<div style="left:583.15px;top:430.6px;width:28.85px;height:2.2px;background:#82c7fd;border-radius:1.2px;"></div>
<div class="t" style="left:583.15px;top:421.6px;height:8px;line-height:8px;font-size:5.7px;color:#4f86bd;width:28.85px;text-align:center;"><span class="n">3</span></div>
<div style="left:677.8px;top:420px;width:28.85px;height:12.8px;background:#fc9b9b;border-radius:1.2px;"></div>
<div class="t" style="left:677.8px;top:421.6px;height:8px;line-height:8px;font-size:5.7px;color:#d46262;width:28.85px;text-align:center;"><span class="n">10</span></div>
<div style="left:709.35px;top:420px;width:28.85px;height:12.8px;background:#fc9b9b;border-radius:1.2px;"></div>
<div class="t" style="left:709.35px;top:421.6px;height:8px;line-height:8px;font-size:5.7px;color:#d46262;width:28.85px;text-align:center;"><span class="n">10</span></div>
<div style="left:740.9px;top:420px;width:28.85px;height:12.8px;background:#fc9b9b;border-radius:1.2px;"></div>
<div class="t" style="left:740.9px;top:421.6px;height:8px;line-height:8px;font-size:5.7px;color:#d46262;width:28.85px;text-align:center;"><span class="n">10</span></div>
<div style="left:772.45px;top:420px;width:28.85px;height:12.8px;background:#fc9b9b;border-radius:1.2px;"></div>
<div class="t" style="left:772.45px;top:421.6px;height:8px;line-height:8px;font-size:5.7px;color:#d46262;width:28.85px;text-align:center;"><span class="n">10</span></div>
<div style="left:804px;top:420px;width:28.85px;height:12.8px;background:#fc9b9b;border-radius:1.2px;"></div>
<div class="t" style="left:804px;top:421.6px;height:8px;line-height:8px;font-size:5.7px;color:#d46262;width:28.85px;text-align:center;"><span class="n">10</span></div>
<div style="left:236.1px;top:442.8px;width:28.85px;height:6px;background:#82c7fd;border-radius:1.2px;"></div>
<div class="t" style="left:236.1px;top:437.6px;height:8px;line-height:8px;font-size:5.7px;color:#4f86bd;width:28.85px;text-align:center;"><span class="n">6</span></div>
<div style="left:267.65px;top:442.8px;width:28.85px;height:6px;background:#82c7fd;border-radius:1.2px;"></div>
<div class="t" style="left:267.65px;top:437.6px;height:8px;line-height:8px;font-size:5.7px;color:#4f86bd;width:28.85px;text-align:center;"><span class="n">6</span></div>
<div style="left:299.2px;top:437.5px;width:28.85px;height:11.3px;background:#82c7fd;border-radius:1.2px;"></div>
<div class="t" style="left:299.2px;top:437.6px;height:8px;line-height:8px;font-size:5.7px;color:#4f86bd;width:28.85px;text-align:center;"><span class="n">9</span></div>
<div style="left:330.75px;top:437.5px;width:28.85px;height:11.3px;background:#82c7fd;border-radius:1.2px;"></div>
<div class="t" style="left:330.75px;top:437.6px;height:8px;line-height:8px;font-size:5.7px;color:#4f86bd;width:28.85px;text-align:center;"><span class="n">9</span></div>
<div style="left:362.3px;top:437.5px;width:28.85px;height:11.3px;background:#82c7fd;border-radius:1.2px;"></div>
<div class="t" style="left:362.3px;top:437.6px;height:8px;line-height:8px;font-size:5.7px;color:#4f86bd;width:28.85px;text-align:center;"><span class="n">9</span></div>
<div style="left:456.95px;top:442.8px;width:28.85px;height:6px;background:#82c7fd;border-radius:1.2px;"></div>
<div class="t" style="left:456.95px;top:437.6px;height:8px;line-height:8px;font-size:5.7px;color:#4f86bd;width:28.85px;text-align:center;"><span class="n">6</span></div>
<div style="left:488.5px;top:442.8px;width:28.85px;height:6px;background:#82c7fd;border-radius:1.2px;"></div>
<div class="t" style="left:488.5px;top:437.6px;height:8px;line-height:8px;font-size:5.7px;color:#4f86bd;width:28.85px;text-align:center;"><span class="n">6</span></div>
<div style="left:520.05px;top:442.8px;width:28.85px;height:6px;background:#82c7fd;border-radius:1.2px;"></div>
<div class="t" style="left:520.05px;top:437.6px;height:8px;line-height:8px;font-size:5.7px;color:#4f86bd;width:28.85px;text-align:center;"><span class="n">6</span></div>
<div style="left:551.6px;top:438.8px;width:28.85px;height:10px;background:#82c7fd;border-radius:1.2px;"></div>
<div class="t" style="left:551.6px;top:437.6px;height:8px;line-height:8px;font-size:5.7px;color:#4f86bd;width:28.85px;text-align:center;"><span class="n">8</span></div>
<div style="left:583.15px;top:442.8px;width:28.85px;height:6px;background:#82c7fd;border-radius:1.2px;"></div>
<div class="t" style="left:583.15px;top:437.6px;height:8px;line-height:8px;font-size:5.7px;color:#4f86bd;width:28.85px;text-align:center;"><span class="n">6</span></div>
<div style="left:677.8px;top:444.3px;width:28.85px;height:4.5px;background:#82c7fd;border-radius:1.2px;"></div>
<div class="t" style="left:677.8px;top:437.6px;height:8px;line-height:8px;font-size:5.7px;color:#4f86bd;width:28.85px;text-align:center;"><span class="n">5</span></div>
<div style="left:709.35px;top:444.3px;width:28.85px;height:4.5px;background:#82c7fd;border-radius:1.2px;"></div>
<div class="t" style="left:709.35px;top:437.6px;height:8px;line-height:8px;font-size:5.7px;color:#4f86bd;width:28.85px;text-align:center;"><span class="n">5</span></div>
<div style="left:740.9px;top:442.8px;width:28.85px;height:6px;background:#82c7fd;border-radius:1.2px;"></div>
<div class="t" style="left:740.9px;top:437.6px;height:8px;line-height:8px;font-size:5.7px;color:#4f86bd;width:28.85px;text-align:center;"><span class="n">6</span></div>
<div style="left:772.45px;top:442.8px;width:28.85px;height:6px;background:#82c7fd;border-radius:1.2px;"></div>
<div class="t" style="left:772.45px;top:437.6px;height:8px;line-height:8px;font-size:5.7px;color:#4f86bd;width:28.85px;text-align:center;"><span class="n">6</span></div>
<div style="left:804px;top:438.8px;width:28.85px;height:10px;background:#82c7fd;border-radius:1.2px;"></div>
<div class="t" style="left:804px;top:437.6px;height:8px;line-height:8px;font-size:5.7px;color:#4f86bd;width:28.85px;text-align:center;"><span class="n">8</span></div>
<div style="left:236.1px;top:453.3px;width:28.85px;height:11.3px;background:#82c7fd;border-radius:1.2px;"></div>
<div class="t" style="left:236.1px;top:453.4px;height:8px;line-height:8px;font-size:5.7px;color:#4f86bd;width:28.85px;text-align:center;"><span class="n">9</span></div>
<div style="left:267.65px;top:453.3px;width:28.85px;height:11.3px;background:#82c7fd;border-radius:1.2px;"></div>
<div class="t" style="left:267.65px;top:453.4px;height:8px;line-height:8px;font-size:5.7px;color:#4f86bd;width:28.85px;text-align:center;"><span class="n">9</span></div>
<div style="left:299.2px;top:453.3px;width:28.85px;height:11.3px;background:#82c7fd;border-radius:1.2px;"></div>
<div class="t" style="left:299.2px;top:453.4px;height:8px;line-height:8px;font-size:5.7px;color:#4f86bd;width:28.85px;text-align:center;"><span class="n">9</span></div>
<div style="left:330.75px;top:453.3px;width:28.85px;height:11.3px;background:#82c7fd;border-radius:1.2px;"></div>
<div class="t" style="left:330.75px;top:453.4px;height:8px;line-height:8px;font-size:5.7px;color:#4f86bd;width:28.85px;text-align:center;"><span class="n">9</span></div>
<div style="left:362.3px;top:453.3px;width:28.85px;height:11.3px;background:#82c7fd;border-radius:1.2px;"></div>
<div class="t" style="left:362.3px;top:453.4px;height:8px;line-height:8px;font-size:5.7px;color:#4f86bd;width:28.85px;text-align:center;"><span class="n">9</span></div>
<div style="left:456.95px;top:453.3px;width:28.85px;height:11.3px;background:#82c7fd;border-radius:1.2px;"></div>
<div class="t" style="left:456.95px;top:453.4px;height:8px;line-height:8px;font-size:5.7px;color:#4f86bd;width:28.85px;text-align:center;"><span class="n">9</span></div>
<div style="left:488.5px;top:453.3px;width:28.85px;height:11.3px;background:#82c7fd;border-radius:1.2px;"></div>
<div class="t" style="left:488.5px;top:453.4px;height:8px;line-height:8px;font-size:5.7px;color:#4f86bd;width:28.85px;text-align:center;"><span class="n">9</span></div>
<div style="left:520.05px;top:453.3px;width:28.85px;height:11.3px;background:#82c7fd;border-radius:1.2px;"></div>
<div class="t" style="left:520.05px;top:453.4px;height:8px;line-height:8px;font-size:5.7px;color:#4f86bd;width:28.85px;text-align:center;"><span class="n">9</span></div>
<div style="left:551.6px;top:453.3px;width:28.85px;height:11.3px;background:#82c7fd;border-radius:1.2px;"></div>
<div class="t" style="left:551.6px;top:453.4px;height:8px;line-height:8px;font-size:5.7px;color:#4f86bd;width:28.85px;text-align:center;"><span class="n">9</span></div>
<div style="left:583.15px;top:453.3px;width:28.85px;height:11.3px;background:#82c7fd;border-radius:1.2px;"></div>
<div class="t" style="left:583.15px;top:453.4px;height:8px;line-height:8px;font-size:5.7px;color:#4f86bd;width:28.85px;text-align:center;"><span class="n">9</span></div>
<div style="left:677.8px;top:453.3px;width:28.85px;height:11.3px;background:#82c7fd;border-radius:1.2px;"></div>
<div class="t" style="left:677.8px;top:453.4px;height:8px;line-height:8px;font-size:5.7px;color:#4f86bd;width:28.85px;text-align:center;"><span class="n">9</span></div>
<div style="left:709.35px;top:453.3px;width:28.85px;height:11.3px;background:#82c7fd;border-radius:1.2px;"></div>
<div class="t" style="left:709.35px;top:453.4px;height:8px;line-height:8px;font-size:5.7px;color:#4f86bd;width:28.85px;text-align:center;"><span class="n">9</span></div>
<div style="left:740.9px;top:453.3px;width:28.85px;height:11.3px;background:#82c7fd;border-radius:1.2px;"></div>
<div class="t" style="left:740.9px;top:453.4px;height:8px;line-height:8px;font-size:5.7px;color:#4f86bd;width:28.85px;text-align:center;"><span class="n">9</span></div>
<div style="left:772.45px;top:453.3px;width:28.85px;height:11.3px;background:#82c7fd;border-radius:1.2px;"></div>
<div class="t" style="left:772.45px;top:453.4px;height:8px;line-height:8px;font-size:5.7px;color:#4f86bd;width:28.85px;text-align:center;"><span class="n">9</span></div>
<div style="left:804px;top:453.3px;width:28.85px;height:11.3px;background:#82c7fd;border-radius:1.2px;"></div>
<div class="t" style="left:804px;top:453.4px;height:8px;line-height:8px;font-size:5.7px;color:#4f86bd;width:28.85px;text-align:center;"><span class="n">9</span></div>
<div style="left:236.1px;top:469.1px;width:28.85px;height:11.3px;background:#82c7fd;border-radius:1.2px;"></div>
<div class="t" style="left:236.1px;top:469.2px;height:8px;line-height:8px;font-size:5.7px;color:#4f86bd;width:28.85px;text-align:center;"><span class="n">9</span></div>
<div style="left:267.65px;top:469.1px;width:28.85px;height:11.3px;background:#82c7fd;border-radius:1.2px;"></div>
<div class="t" style="left:267.65px;top:469.2px;height:8px;line-height:8px;font-size:5.7px;color:#4f86bd;width:28.85px;text-align:center;"><span class="n">9</span></div>
<div style="left:299.2px;top:469.1px;width:28.85px;height:11.3px;background:#82c7fd;border-radius:1.2px;"></div>
<div class="t" style="left:299.2px;top:469.2px;height:8px;line-height:8px;font-size:5.7px;color:#4f86bd;width:28.85px;text-align:center;"><span class="n">9</span></div>
<div style="left:330.75px;top:469.1px;width:28.85px;height:11.3px;background:#82c7fd;border-radius:1.2px;"></div>
<div class="t" style="left:330.75px;top:469.2px;height:8px;line-height:8px;font-size:5.7px;color:#4f86bd;width:28.85px;text-align:center;"><span class="n">9</span></div>
<div style="left:362.3px;top:469.1px;width:28.85px;height:11.3px;background:#82c7fd;border-radius:1.2px;"></div>
<div class="t" style="left:362.3px;top:469.2px;height:8px;line-height:8px;font-size:5.7px;color:#4f86bd;width:28.85px;text-align:center;"><span class="n">9</span></div>
<div style="left:456.95px;top:469.1px;width:28.85px;height:11.3px;background:#82c7fd;border-radius:1.2px;"></div>
<div class="t" style="left:456.95px;top:469.2px;height:8px;line-height:8px;font-size:5.7px;color:#4f86bd;width:28.85px;text-align:center;"><span class="n">9</span></div>
<div style="left:488.5px;top:469.1px;width:28.85px;height:11.3px;background:#82c7fd;border-radius:1.2px;"></div>
<div class="t" style="left:488.5px;top:469.2px;height:8px;line-height:8px;font-size:5.7px;color:#4f86bd;width:28.85px;text-align:center;"><span class="n">9</span></div>
<div style="left:520.05px;top:469.1px;width:28.85px;height:11.3px;background:#82c7fd;border-radius:1.2px;"></div>
<div class="t" style="left:520.05px;top:469.2px;height:8px;line-height:8px;font-size:5.7px;color:#4f86bd;width:28.85px;text-align:center;"><span class="n">9</span></div>
<div style="left:551.6px;top:469.1px;width:28.85px;height:11.3px;background:#82c7fd;border-radius:1.2px;"></div>
<div class="t" style="left:551.6px;top:469.2px;height:8px;line-height:8px;font-size:5.7px;color:#4f86bd;width:28.85px;text-align:center;"><span class="n">9</span></div>
<div style="left:583.15px;top:469.1px;width:28.85px;height:11.3px;background:#82c7fd;border-radius:1.2px;"></div>
<div class="t" style="left:583.15px;top:469.2px;height:8px;line-height:8px;font-size:5.7px;color:#4f86bd;width:28.85px;text-align:center;"><span class="n">9</span></div>
<div style="left:677.8px;top:469.1px;width:28.85px;height:11.3px;background:#82c7fd;border-radius:1.2px;"></div>
<div class="t" style="left:677.8px;top:469.2px;height:8px;line-height:8px;font-size:5.7px;color:#4f86bd;width:28.85px;text-align:center;"><span class="n">9</span></div>
<div style="left:709.35px;top:469.1px;width:28.85px;height:11.3px;background:#82c7fd;border-radius:1.2px;"></div>
<div class="t" style="left:709.35px;top:469.2px;height:8px;line-height:8px;font-size:5.7px;color:#4f86bd;width:28.85px;text-align:center;"><span class="n">9</span></div>
<div style="left:740.9px;top:469.1px;width:28.85px;height:11.3px;background:#82c7fd;border-radius:1.2px;"></div>
<div class="t" style="left:740.9px;top:469.2px;height:8px;line-height:8px;font-size:5.7px;color:#4f86bd;width:28.85px;text-align:center;"><span class="n">9</span></div>
<div style="left:772.45px;top:469.1px;width:28.85px;height:11.3px;background:#82c7fd;border-radius:1.2px;"></div>
<div class="t" style="left:772.45px;top:469.2px;height:8px;line-height:8px;font-size:5.7px;color:#4f86bd;width:28.85px;text-align:center;"><span class="n">9</span></div>
<div style="left:804px;top:469.1px;width:28.85px;height:11.3px;background:#82c7fd;border-radius:1.2px;"></div>
<div class="t" style="left:804px;top:469.2px;height:8px;line-height:8px;font-size:5.7px;color:#4f86bd;width:28.85px;text-align:center;"><span class="n">9</span></div>
<div class="tb" style="left:236.5px;top:317.6px;width:61.9px;height:10.8px;line-height:9.8px;background:#d3ecba;border:.6px dashed #b3dc8a;"><svg style="left:5px;top:1.7px;" width="6" height="6.4" viewBox="0 0 6 6.4"><rect x=".3" y=".3" width="5.4" height="5.8" rx=".7" fill="#2f7fd0"/><path d="M1.6 2 H4.4 M1.6 3.4 H4.4 M3 2 V4.8" stroke="#fff" stroke-width=".6"/></svg><span class="l" style="left:13.5px;">初期画面で時間</span></div>
<div class="tb" style="left:298.4px;top:317.6px;width:315.7px;height:10.8px;line-height:9.8px;background:#c4e4f8;border:.6px dashed #94cdf2;"><div style="left:93.25px;top:0;width:31.55px;height:10.8px;background:rgba(255,255,255,.33);"></div><div style="left:124.8px;top:0;width:31.55px;height:10.8px;background:rgba(255,255,255,.33);"></div><div style="left:314.1px;top:0;width:1px;height:10.8px;background:rgba(255,255,255,.33);"></div><svg style="left:5px;top:1.7px;" width="6" height="6.4" viewBox="0 0 6 6.4"><rect x=".3" y=".6" width="5.4" height="5.2" rx=".5" fill="#2f7fd0"/><path d="M.3 2.4 H5.7 M.3 4.2 H5.7" stroke="#fff" stroke-width=".5"/></svg><span class="l" style="left:13.5px;">グラフの経過時間軸のコンテキストメニューに[拡大]、[縮小]が表示されない。</span></div>
<div class="tb" style="left:677.7px;top:317.6px;width:62px;height:10.8px;line-height:9.8px;background:#ebebeb;border:.6px dashed #b9b9b9;"><svg style="left:5px;top:1.7px;" width="6" height="6.4" viewBox="0 0 6 6.4"><rect x=".5" y="1" width="5" height="5.2" rx=".6" fill="#8a8a8a"/><rect x="1.8" y=".2" width="2.4" height="1.5" rx=".3" fill="#8a8a8a"/></svg><span class="l" style="left:13.5px;">業者対応</span></div>
<div class="tb" style="left:739.7px;top:317.6px;width:102.3px;height:10.8px;line-height:9.8px;background:#c4e4f8;border:.6px dashed #94cdf2;"><div style="left:93.65px;top:0;width:8.05px;height:10.8px;background:rgba(255,255,255,.33);"></div><svg style="left:5px;top:1.7px;" width="6" height="6.4" viewBox="0 0 6 6.4"><rect x=".3" y=".6" width="5.4" height="5.2" rx=".5" fill="#2f7fd0"/><path d="M.3 2.4 H5.7 M.3 4.2 H5.7" stroke="#fff" stroke-width=".5"/></svg><span class="l" style="left:13.5px;">数値を経過時間軸の単位に設定</span></div>
<div class="tb" style="left:236.5px;top:331.2px;width:61.9px;height:10.8px;line-height:9.8px;background:#d3ecba;border:.6px dashed #b3dc8a;"><svg style="left:5px;top:1.7px;" width="6" height="6.4" viewBox="0 0 6 6.4"><rect x=".3" y=".3" width="5.4" height="5.8" rx=".7" fill="#2f7fd0"/><path d="M1.6 2 H4.4 M1.6 3.4 H4.4 M3 2 V4.8" stroke="#fff" stroke-width=".6"/></svg><span class="l" style="left:13.5px;">グラフの拡大縮</span></div>
<div class="tb" style="left:298.4px;top:331.2px;width:94.65px;height:10.8px;line-height:9.8px;background:#c4e4f8;border:.6px dashed #94cdf2;"><div style="left:93.25px;top:0;width:0.8px;height:10.8px;background:rgba(255,255,255,.33);"></div><svg style="left:5px;top:1.7px;" width="6" height="6.4" viewBox="0 0 6 6.4"><rect x=".5" y="1" width="5" height="5.2" rx=".6" fill="#2f7fd0"/><rect x="1.8" y=".2" width="2.4" height="1.5" rx=".3" fill="#2f7fd0"/></svg><span class="l" style="left:13.5px;">音声認識機能<span class="n">/</span>仕様<span class="n">/</span>仕様作(</span></div>
<div class="tb" style="left:456.15px;top:331.2px;width:126.4px;height:10.8px;line-height:9.8px;background:#c4e4f8;border:.6px dashed #94cdf2;"><svg style="left:5px;top:1.7px;" width="6" height="6.4" viewBox="0 0 6 6.4"><rect x=".3" y=".6" width="5.4" height="5.2" rx=".5" fill="#2f7fd0"/><path d="M.3 2.4 H5.7 M.3 4.2 H5.7" stroke="#fff" stroke-width=".5"/></svg><span class="l" style="left:13.5px;">グラフ表示完了ダイアログにエラーア:</span></div>
<div class="tb" style="left:236.5px;top:344.9px;width:61.9px;height:10.8px;line-height:9.8px;background:#d3ecba;border:.6px dashed #b3dc8a;"><svg style="left:5px;top:1.7px;" width="6" height="6.4" viewBox="0 0 6 6.4"><rect x=".3" y=".3" width="5.4" height="5.8" rx=".7" fill="#2f7fd0"/><path d="M1.6 2 H4.4 M1.6 3.4 H4.4 M3 2 V4.8" stroke="#fff" stroke-width=".6"/></svg><span class="l" style="left:13.5px;">温度データの定</span></div>
<div class="tb" style="left:456.15px;top:344.9px;width:94.85px;height:10.8px;line-height:9.8px;background:#c4e4f8;border:.6px dashed #94cdf2;"><svg style="left:5px;top:1.7px;" width="6" height="6.4" viewBox="0 0 6 6.4"><rect x=".5" y="1" width="5" height="5.2" rx=".6" fill="#2f7fd0"/><rect x="1.8" y=".2" width="2.4" height="1.5" rx=".3" fill="#2f7fd0"/></svg><span class="l" style="left:13.5px;">音声認識機能<span class="n">/</span>設計<span class="n">/</span>集中設(</span></div>
<div class="tb" style="left:551px;top:344.9px;width:220.85px;height:10.8px;line-height:9.8px;background:#c4e4f8;border:.6px dashed #94cdf2;"><div style="left:61.5px;top:0;width:31.55px;height:10.8px;background:rgba(255,255,255,.33);"></div><div style="left:93.05px;top:0;width:31.55px;height:10.8px;background:rgba(255,255,255,.33);"></div><svg style="left:5px;top:1.7px;" width="6" height="6.4" viewBox="0 0 6 6.4"><rect x=".3" y=".6" width="5.4" height="5.2" rx=".5" fill="#2f7fd0"/><path d="M.3 2.4 H5.7 M.3 4.2 H5.7" stroke="#fff" stroke-width=".5"/></svg><span class="l" style="left:13.5px;">ファイルロード失敗時のエラーダイアログにタイプミスがあるバグ</span></div>
<div class="tb" style="left:233.5px;top:358.6px;width:349.05px;height:10.8px;line-height:9.8px;background:#c4e4f8;border:.6px dashed #94cdf2;"><div style="left:158.15px;top:0;width:31.55px;height:10.8px;background:rgba(255,255,255,.33);"></div><div style="left:189.7px;top:0;width:31.55px;height:10.8px;background:rgba(255,255,255,.33);"></div><svg style="left:5px;top:1.7px;" width="6" height="6.4" viewBox="0 0 6 6.4"><rect x=".3" y=".6" width="5.4" height="5.2" rx=".5" fill="#2f7fd0"/><path d="M.3 2.4 H5.7 M.3 4.2 H5.7" stroke="#fff" stroke-width=".5"/></svg><span class="l" style="left:13.5px;">グラフの縮小時に<span class="n">0%</span>まで縮小できてしまう問題</span></div>
<div class="tb" style="left:236.5px;top:390.5px;width:30.35px;height:10.8px;line-height:9.8px;background:#d3ecba;border:.6px dashed #b3dc8a;"><svg style="left:5px;top:1.7px;" width="6" height="6.4" viewBox="0 0 6 6.4"><rect x=".5" y="1" width="5" height="5.2" rx=".6" fill="#2f7fd0"/><rect x="1.8" y=".2" width="2.4" height="1.5" rx=".3" fill="#2f7fd0"/></svg><span class="l" style="left:13.5px;">入力</span></div>
<div class="tb" style="left:266.85px;top:390.5px;width:126.2px;height:10.8px;line-height:9.8px;background:#d3ecba;border:.6px dashed #b3dc8a;"><div style="left:124.8px;top:0;width:0.8px;height:10.8px;background:rgba(255,255,255,.33);"></div><svg style="left:5px;top:1.7px;" width="6" height="6.4" viewBox="0 0 6 6.4"><rect x=".5" y="1" width="5" height="5.2" rx=".6" fill="#2f7fd0"/><rect x="1.8" y=".2" width="2.4" height="1.5" rx=".3" fill="#2f7fd0"/></svg><span class="l" style="left:13.5px;">入力検知機能<span class="n">/</span>設計<span class="n">/</span>設計レビュー</span></div>
<div class="tb" style="left:708.95px;top:390.5px;width:125px;height:10.8px;line-height:9.8px;background:#c4e4f8;border:.6px dashed #94cdf2;"><svg style="left:5px;top:1.7px;" width="6" height="6.4" viewBox="0 0 6 6.4"><rect x=".5" y="1" width="5" height="5.2" rx=".6" fill="#2f7fd0"/><rect x="1.8" y=".2" width="2.4" height="1.5" rx=".3" fill="#2f7fd0"/></svg><span class="l" style="left:13.5px;">入力検知機能<span class="n">/</span>製作<span class="n">/</span>製作レビュー</span></div>
<div class="tb" style="left:233.5px;top:404.3px;width:475.45px;height:10.8px;line-height:9.8px;background:#c4e4f8;border:.6px dashed #94cdf2;"><div style="left:158.15px;top:0;width:31.55px;height:10.8px;background:rgba(255,255,255,.33);"></div><div style="left:189.7px;top:0;width:31.55px;height:10.8px;background:rgba(255,255,255,.33);"></div><div style="left:379px;top:0;width:31.55px;height:10.8px;background:rgba(255,255,255,.33);"></div><div style="left:410.55px;top:0;width:31.55px;height:10.8px;background:rgba(255,255,255,.33);"></div><svg style="left:5px;top:1.7px;" width="6" height="6.4" viewBox="0 0 6 6.4"><rect x=".5" y="1" width="5" height="5.2" rx=".6" fill="#2f7fd0"/><rect x="1.8" y=".2" width="2.4" height="1.5" rx=".3" fill="#2f7fd0"/></svg><span class="l" style="left:13.5px;">入力検知機能<span class="n">/</span>製作<span class="n">/</span>製作</span></div>
<div class="tb" style="left:708.95px;top:404.3px;width:125px;height:10.8px;line-height:9.8px;background:#c4e4f8;border:.6px dashed #94cdf2;"><svg style="left:5px;top:1.7px;" width="6" height="6.4" viewBox="0 0 6 6.4"><rect x=".5" y="1" width="5" height="5.2" rx=".6" fill="#2f7fd0"/><rect x="1.8" y=".2" width="2.4" height="1.5" rx=".3" fill="#2f7fd0"/></svg><span class="l" style="left:13.5px;">入力検知機能<span class="n">/</span>製作<span class="n">/</span>不具合修正</span></div>
<div style="left:361.2px;top:298px;width:0.8px;height:184px;background:#d2d2d2;"></div>
<svg style="left:358.1px;top:290.8px;" width="7" height="8" viewBox="0 0 7 8"><circle cx="3.5" cy="3.4" r="2.5" fill="#fff" stroke="#f2604e" stroke-width="1.3"/><path d="M2.4 6 L3.5 7.6 L4.6 6" fill="#f2604e"/></svg>
</div></body></html>
